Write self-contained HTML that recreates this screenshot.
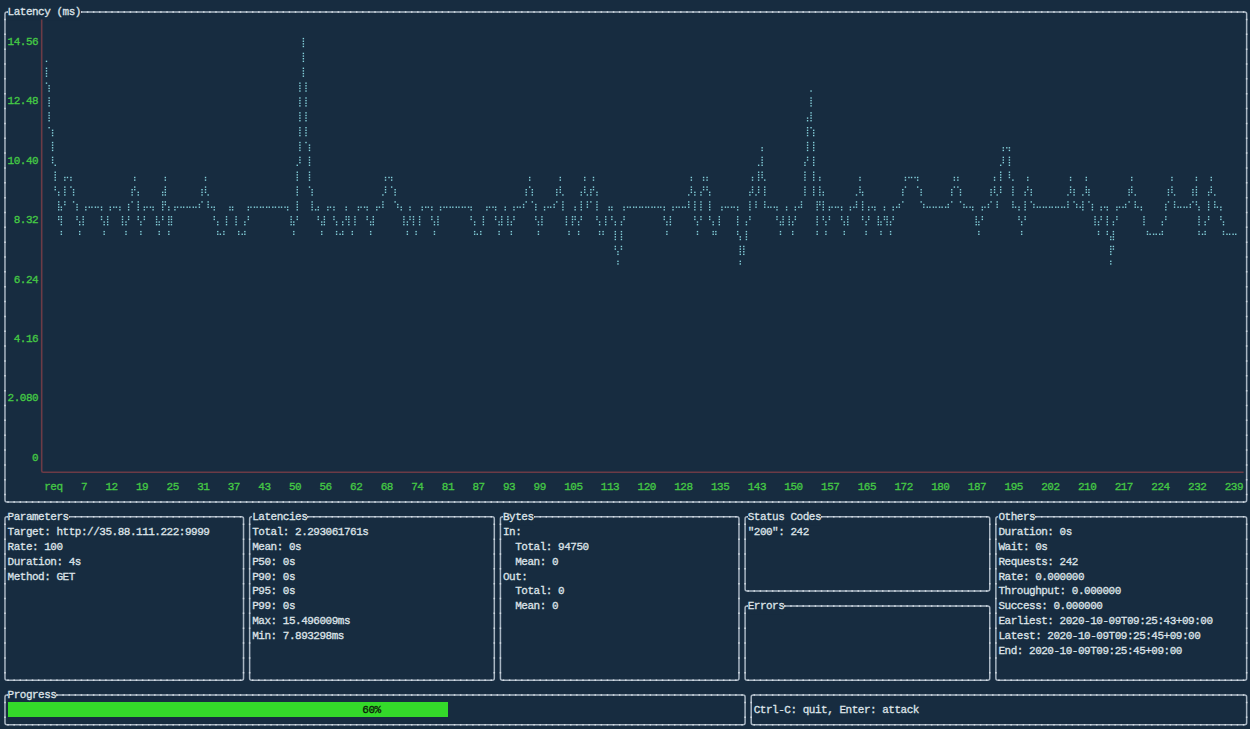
<!DOCTYPE html>
<html><head><meta charset="utf-8"><style>
html,body{margin:0;padding:0;}
body{width:1250px;height:729px;background:#172c40;position:relative;overflow:hidden;}
.t{position:absolute;white-space:pre;font-family:"Liberation Mono",monospace;font-size:11px;letter-spacing:-0.483px;line-height:14.848px;height:14.848px;transform:scaleY(1.05);transform-origin:0 50%;-webkit-text-stroke:0.3px currentColor;}
</style></head><body>
<svg style="position:absolute;left:0;top:0" width="1250" height="729"><g fill="none" stroke="#a9b6c3" stroke-width="1.5"><path d="M6.98,12.03H1244.65Q1246.65,12.03 1246.65,14.03V500.01Q1246.65,502.01 1244.65,502.01H6.98Q4.98,502.01 4.98,500.01V14.03Q4.98,12.03 6.98,12.03Z"/><path class="sp" d="M8.04,12.03h0M8.04,502.01h0M14.15,12.03h0M14.15,502.01h0M20.27,12.03h0M20.27,502.01h0M26.39,12.03h0M26.39,502.01h0M32.50,12.03h0M32.50,502.01h0M38.62,12.03h0M38.62,502.01h0M44.74,12.03h0M44.74,502.01h0M50.85,12.03h0M50.85,502.01h0M56.97,12.03h0M56.97,502.01h0M63.09,12.03h0M63.09,502.01h0M69.20,12.03h0M69.20,502.01h0M75.32,12.03h0M75.32,502.01h0M81.44,12.03h0M81.44,502.01h0M87.55,12.03h0M87.55,502.01h0M93.67,12.03h0M93.67,502.01h0M99.79,12.03h0M99.79,502.01h0M105.90,12.03h0M105.90,502.01h0M112.02,12.03h0M112.02,502.01h0M118.14,12.03h0M118.14,502.01h0M124.25,12.03h0M124.25,502.01h0M130.37,12.03h0M130.37,502.01h0M136.49,12.03h0M136.49,502.01h0M142.60,12.03h0M142.60,502.01h0M148.72,12.03h0M148.72,502.01h0M154.83,12.03h0M154.83,502.01h0M160.95,12.03h0M160.95,502.01h0M167.07,12.03h0M167.07,502.01h0M173.18,12.03h0M173.18,502.01h0M179.30,12.03h0M179.30,502.01h0M185.42,12.03h0M185.42,502.01h0M191.53,12.03h0M191.53,502.01h0M197.65,12.03h0M197.65,502.01h0M203.77,12.03h0M203.77,502.01h0M209.88,12.03h0M209.88,502.01h0M216.00,12.03h0M216.00,502.01h0M222.12,12.03h0M222.12,502.01h0M228.23,12.03h0M228.23,502.01h0M234.35,12.03h0M234.35,502.01h0M240.47,12.03h0M240.47,502.01h0M246.58,12.03h0M246.58,502.01h0M252.70,12.03h0M252.70,502.01h0M258.82,12.03h0M258.82,502.01h0M264.93,12.03h0M264.93,502.01h0M271.05,12.03h0M271.05,502.01h0M277.17,12.03h0M277.17,502.01h0M283.28,12.03h0M283.28,502.01h0M289.40,12.03h0M289.40,502.01h0M295.52,12.03h0M295.52,502.01h0M301.63,12.03h0M301.63,502.01h0M307.75,12.03h0M307.75,502.01h0M313.87,12.03h0M313.87,502.01h0M319.98,12.03h0M319.98,502.01h0M326.10,12.03h0M326.10,502.01h0M332.22,12.03h0M332.22,502.01h0M338.33,12.03h0M338.33,502.01h0M344.45,12.03h0M344.45,502.01h0M350.57,12.03h0M350.57,502.01h0M356.68,12.03h0M356.68,502.01h0M362.80,12.03h0M362.80,502.01h0M368.92,12.03h0M368.92,502.01h0M375.03,12.03h0M375.03,502.01h0M381.15,12.03h0M381.15,502.01h0M387.27,12.03h0M387.27,502.01h0M393.38,12.03h0M393.38,502.01h0M399.50,12.03h0M399.50,502.01h0M405.62,12.03h0M405.62,502.01h0M411.73,12.03h0M411.73,502.01h0M417.85,12.03h0M417.85,502.01h0M423.97,12.03h0M423.97,502.01h0M430.08,12.03h0M430.08,502.01h0M436.20,12.03h0M436.20,502.01h0M442.32,12.03h0M442.32,502.01h0M448.43,12.03h0M448.43,502.01h0M454.55,12.03h0M454.55,502.01h0M460.67,12.03h0M460.67,502.01h0M466.78,12.03h0M466.78,502.01h0M472.90,12.03h0M472.90,502.01h0M479.01,12.03h0M479.01,502.01h0M485.13,12.03h0M485.13,502.01h0M491.25,12.03h0M491.25,502.01h0M497.36,12.03h0M497.36,502.01h0M503.48,12.03h0M503.48,502.01h0M509.60,12.03h0M509.60,502.01h0M515.71,12.03h0M515.71,502.01h0M521.83,12.03h0M521.83,502.01h0M527.95,12.03h0M527.95,502.01h0M534.06,12.03h0M534.06,502.01h0M540.18,12.03h0M540.18,502.01h0M546.30,12.03h0M546.30,502.01h0M552.41,12.03h0M552.41,502.01h0M558.53,12.03h0M558.53,502.01h0M564.65,12.03h0M564.65,502.01h0M570.76,12.03h0M570.76,502.01h0M576.88,12.03h0M576.88,502.01h0M583.00,12.03h0M583.00,502.01h0M589.11,12.03h0M589.11,502.01h0M595.23,12.03h0M595.23,502.01h0M601.35,12.03h0M601.35,502.01h0M607.46,12.03h0M607.46,502.01h0M613.58,12.03h0M613.58,502.01h0M619.70,12.03h0M619.70,502.01h0M625.81,12.03h0M625.81,502.01h0M631.93,12.03h0M631.93,502.01h0M638.05,12.03h0M638.05,502.01h0M644.16,12.03h0M644.16,502.01h0M650.28,12.03h0M650.28,502.01h0M656.40,12.03h0M656.40,502.01h0M662.51,12.03h0M662.51,502.01h0M668.63,12.03h0M668.63,502.01h0M674.75,12.03h0M674.75,502.01h0M680.86,12.03h0M680.86,502.01h0M686.98,12.03h0M686.98,502.01h0M693.10,12.03h0M693.10,502.01h0M699.21,12.03h0M699.21,502.01h0M705.33,12.03h0M705.33,502.01h0M711.45,12.03h0M711.45,502.01h0M717.56,12.03h0M717.56,502.01h0M723.68,12.03h0M723.68,502.01h0M729.80,12.03h0M729.80,502.01h0M735.91,12.03h0M735.91,502.01h0M742.03,12.03h0M742.03,502.01h0M748.15,12.03h0M748.15,502.01h0M754.26,12.03h0M754.26,502.01h0M760.38,12.03h0M760.38,502.01h0M766.50,12.03h0M766.50,502.01h0M772.61,12.03h0M772.61,502.01h0M778.73,12.03h0M778.73,502.01h0M784.84,12.03h0M784.84,502.01h0M790.96,12.03h0M790.96,502.01h0M797.08,12.03h0M797.08,502.01h0M803.19,12.03h0M803.19,502.01h0M809.31,12.03h0M809.31,502.01h0M815.43,12.03h0M815.43,502.01h0M821.54,12.03h0M821.54,502.01h0M827.66,12.03h0M827.66,502.01h0M833.78,12.03h0M833.78,502.01h0M839.89,12.03h0M839.89,502.01h0M846.01,12.03h0M846.01,502.01h0M852.13,12.03h0M852.13,502.01h0M858.24,12.03h0M858.24,502.01h0M864.36,12.03h0M864.36,502.01h0M870.48,12.03h0M870.48,502.01h0M876.59,12.03h0M876.59,502.01h0M882.71,12.03h0M882.71,502.01h0M888.83,12.03h0M888.83,502.01h0M894.94,12.03h0M894.94,502.01h0M901.06,12.03h0M901.06,502.01h0M907.18,12.03h0M907.18,502.01h0M913.29,12.03h0M913.29,502.01h0M919.41,12.03h0M919.41,502.01h0M925.53,12.03h0M925.53,502.01h0M931.64,12.03h0M931.64,502.01h0M937.76,12.03h0M937.76,502.01h0M943.88,12.03h0M943.88,502.01h0M949.99,12.03h0M949.99,502.01h0M956.11,12.03h0M956.11,502.01h0M962.23,12.03h0M962.23,502.01h0M968.34,12.03h0M968.34,502.01h0M974.46,12.03h0M974.46,502.01h0M980.58,12.03h0M980.58,502.01h0M986.69,12.03h0M986.69,502.01h0M992.81,12.03h0M992.81,502.01h0M998.93,12.03h0M998.93,502.01h0M1005.04,12.03h0M1005.04,502.01h0M1011.16,12.03h0M1011.16,502.01h0M1017.28,12.03h0M1017.28,502.01h0M1023.39,12.03h0M1023.39,502.01h0M1029.51,12.03h0M1029.51,502.01h0M1035.63,12.03h0M1035.63,502.01h0M1041.74,12.03h0M1041.74,502.01h0M1047.86,12.03h0M1047.86,502.01h0M1053.98,12.03h0M1053.98,502.01h0M1060.09,12.03h0M1060.09,502.01h0M1066.21,12.03h0M1066.21,502.01h0M1072.33,12.03h0M1072.33,502.01h0M1078.44,12.03h0M1078.44,502.01h0M1084.56,12.03h0M1084.56,502.01h0M1090.67,12.03h0M1090.67,502.01h0M1096.79,12.03h0M1096.79,502.01h0M1102.91,12.03h0M1102.91,502.01h0M1109.02,12.03h0M1109.02,502.01h0M1115.14,12.03h0M1115.14,502.01h0M1121.26,12.03h0M1121.26,502.01h0M1127.37,12.03h0M1127.37,502.01h0M1133.49,12.03h0M1133.49,502.01h0M1139.61,12.03h0M1139.61,502.01h0M1145.72,12.03h0M1145.72,502.01h0M1151.84,12.03h0M1151.84,502.01h0M1157.96,12.03h0M1157.96,502.01h0M1164.07,12.03h0M1164.07,502.01h0M1170.19,12.03h0M1170.19,502.01h0M1176.31,12.03h0M1176.31,502.01h0M1182.42,12.03h0M1182.42,502.01h0M1188.54,12.03h0M1188.54,502.01h0M1194.66,12.03h0M1194.66,502.01h0M1200.77,12.03h0M1200.77,502.01h0M1206.89,12.03h0M1206.89,502.01h0M1213.01,12.03h0M1213.01,502.01h0M1219.12,12.03h0M1219.12,502.01h0M1225.24,12.03h0M1225.24,502.01h0M1231.36,12.03h0M1231.36,502.01h0M1237.47,12.03h0M1237.47,502.01h0M1243.59,12.03h0M1243.59,502.01h0M4.98,19.45h0M1246.65,19.45h0M4.98,34.30h0M1246.65,34.30h0M4.98,49.15h0M1246.65,49.15h0M4.98,64.00h0M1246.65,64.00h0M4.98,78.85h0M1246.65,78.85h0M4.98,93.69h0M1246.65,93.69h0M4.98,108.54h0M1246.65,108.54h0M4.98,123.39h0M1246.65,123.39h0M4.98,138.24h0M1246.65,138.24h0M4.98,153.09h0M1246.65,153.09h0M4.98,167.93h0M1246.65,167.93h0M4.98,182.78h0M1246.65,182.78h0M4.98,197.63h0M1246.65,197.63h0M4.98,212.48h0M1246.65,212.48h0M4.98,227.32h0M1246.65,227.32h0M4.98,242.17h0M1246.65,242.17h0M4.98,257.02h0M1246.65,257.02h0M4.98,271.87h0M1246.65,271.87h0M4.98,286.72h0M1246.65,286.72h0M4.98,301.57h0M1246.65,301.57h0M4.98,316.41h0M1246.65,316.41h0M4.98,331.26h0M1246.65,331.26h0M4.98,346.11h0M1246.65,346.11h0M4.98,360.96h0M1246.65,360.96h0M4.98,375.81h0M1246.65,375.81h0M4.98,390.65h0M1246.65,390.65h0M4.98,405.50h0M1246.65,405.50h0M4.98,420.35h0M1246.65,420.35h0M4.98,435.20h0M1246.65,435.20h0M4.98,450.05h0M1246.65,450.05h0M4.98,464.89h0M1246.65,464.89h0M4.98,479.74h0M1246.65,479.74h0M4.98,494.59h0M1246.65,494.59h0"/><path d="M6.98,516.86H241.53Q243.53,516.86 243.53,518.86V678.19Q243.53,680.19 241.53,680.19H6.98Q4.98,680.19 4.98,678.19V518.86Q4.98,516.86 6.98,516.86Z"/><path class="sp" d="M8.04,516.86h0M8.04,680.19h0M14.15,516.86h0M14.15,680.19h0M20.27,516.86h0M20.27,680.19h0M26.39,516.86h0M26.39,680.19h0M32.50,516.86h0M32.50,680.19h0M38.62,516.86h0M38.62,680.19h0M44.74,516.86h0M44.74,680.19h0M50.85,516.86h0M50.85,680.19h0M56.97,516.86h0M56.97,680.19h0M63.09,516.86h0M63.09,680.19h0M69.20,516.86h0M69.20,680.19h0M75.32,516.86h0M75.32,680.19h0M81.44,516.86h0M81.44,680.19h0M87.55,516.86h0M87.55,680.19h0M93.67,516.86h0M93.67,680.19h0M99.79,516.86h0M99.79,680.19h0M105.90,516.86h0M105.90,680.19h0M112.02,516.86h0M112.02,680.19h0M118.14,516.86h0M118.14,680.19h0M124.25,516.86h0M124.25,680.19h0M130.37,516.86h0M130.37,680.19h0M136.49,516.86h0M136.49,680.19h0M142.60,516.86h0M142.60,680.19h0M148.72,516.86h0M148.72,680.19h0M154.83,516.86h0M154.83,680.19h0M160.95,516.86h0M160.95,680.19h0M167.07,516.86h0M167.07,680.19h0M173.18,516.86h0M173.18,680.19h0M179.30,516.86h0M179.30,680.19h0M185.42,516.86h0M185.42,680.19h0M191.53,516.86h0M191.53,680.19h0M197.65,516.86h0M197.65,680.19h0M203.77,516.86h0M203.77,680.19h0M209.88,516.86h0M209.88,680.19h0M216.00,516.86h0M216.00,680.19h0M222.12,516.86h0M222.12,680.19h0M228.23,516.86h0M228.23,680.19h0M234.35,516.86h0M234.35,680.19h0M240.47,516.86h0M240.47,680.19h0M4.98,524.29h0M243.53,524.29h0M4.98,539.13h0M243.53,539.13h0M4.98,553.98h0M243.53,553.98h0M4.98,568.83h0M243.53,568.83h0M4.98,583.68h0M243.53,583.68h0M4.98,598.53h0M243.53,598.53h0M4.98,613.37h0M243.53,613.37h0M4.98,628.22h0M243.53,628.22h0M4.98,643.07h0M243.53,643.07h0M4.98,657.92h0M243.53,657.92h0M4.98,672.77h0M243.53,672.77h0"/><path d="M251.64,516.86H492.31Q494.31,516.86 494.31,518.86V678.19Q494.31,680.19 492.31,680.19H251.64Q249.64,680.19 249.64,678.19V518.86Q249.64,516.86 251.64,516.86Z"/><path class="sp" d="M252.70,516.86h0M252.70,680.19h0M258.82,516.86h0M258.82,680.19h0M264.93,516.86h0M264.93,680.19h0M271.05,516.86h0M271.05,680.19h0M277.17,516.86h0M277.17,680.19h0M283.28,516.86h0M283.28,680.19h0M289.40,516.86h0M289.40,680.19h0M295.52,516.86h0M295.52,680.19h0M301.63,516.86h0M301.63,680.19h0M307.75,516.86h0M307.75,680.19h0M313.87,516.86h0M313.87,680.19h0M319.98,516.86h0M319.98,680.19h0M326.10,516.86h0M326.10,680.19h0M332.22,516.86h0M332.22,680.19h0M338.33,516.86h0M338.33,680.19h0M344.45,516.86h0M344.45,680.19h0M350.57,516.86h0M350.57,680.19h0M356.68,516.86h0M356.68,680.19h0M362.80,516.86h0M362.80,680.19h0M368.92,516.86h0M368.92,680.19h0M375.03,516.86h0M375.03,680.19h0M381.15,516.86h0M381.15,680.19h0M387.27,516.86h0M387.27,680.19h0M393.38,516.86h0M393.38,680.19h0M399.50,516.86h0M399.50,680.19h0M405.62,516.86h0M405.62,680.19h0M411.73,516.86h0M411.73,680.19h0M417.85,516.86h0M417.85,680.19h0M423.97,516.86h0M423.97,680.19h0M430.08,516.86h0M430.08,680.19h0M436.20,516.86h0M436.20,680.19h0M442.32,516.86h0M442.32,680.19h0M448.43,516.86h0M448.43,680.19h0M454.55,516.86h0M454.55,680.19h0M460.67,516.86h0M460.67,680.19h0M466.78,516.86h0M466.78,680.19h0M472.90,516.86h0M472.90,680.19h0M479.01,516.86h0M479.01,680.19h0M485.13,516.86h0M485.13,680.19h0M491.25,516.86h0M491.25,680.19h0M249.64,524.29h0M494.31,524.29h0M249.64,539.13h0M494.31,539.13h0M249.64,553.98h0M494.31,553.98h0M249.64,568.83h0M494.31,568.83h0M249.64,583.68h0M494.31,583.68h0M249.64,598.53h0M494.31,598.53h0M249.64,613.37h0M494.31,613.37h0M249.64,628.22h0M494.31,628.22h0M249.64,643.07h0M494.31,643.07h0M249.64,657.92h0M494.31,657.92h0M249.64,672.77h0M494.31,672.77h0"/><path d="M502.42,516.86H736.97Q738.97,516.86 738.97,518.86V678.19Q738.97,680.19 736.97,680.19H502.42Q500.42,680.19 500.42,678.19V518.86Q500.42,516.86 502.42,516.86Z"/><path class="sp" d="M503.48,516.86h0M503.48,680.19h0M509.60,516.86h0M509.60,680.19h0M515.71,516.86h0M515.71,680.19h0M521.83,516.86h0M521.83,680.19h0M527.95,516.86h0M527.95,680.19h0M534.06,516.86h0M534.06,680.19h0M540.18,516.86h0M540.18,680.19h0M546.30,516.86h0M546.30,680.19h0M552.41,516.86h0M552.41,680.19h0M558.53,516.86h0M558.53,680.19h0M564.65,516.86h0M564.65,680.19h0M570.76,516.86h0M570.76,680.19h0M576.88,516.86h0M576.88,680.19h0M583.00,516.86h0M583.00,680.19h0M589.11,516.86h0M589.11,680.19h0M595.23,516.86h0M595.23,680.19h0M601.35,516.86h0M601.35,680.19h0M607.46,516.86h0M607.46,680.19h0M613.58,516.86h0M613.58,680.19h0M619.70,516.86h0M619.70,680.19h0M625.81,516.86h0M625.81,680.19h0M631.93,516.86h0M631.93,680.19h0M638.05,516.86h0M638.05,680.19h0M644.16,516.86h0M644.16,680.19h0M650.28,516.86h0M650.28,680.19h0M656.40,516.86h0M656.40,680.19h0M662.51,516.86h0M662.51,680.19h0M668.63,516.86h0M668.63,680.19h0M674.75,516.86h0M674.75,680.19h0M680.86,516.86h0M680.86,680.19h0M686.98,516.86h0M686.98,680.19h0M693.10,516.86h0M693.10,680.19h0M699.21,516.86h0M699.21,680.19h0M705.33,516.86h0M705.33,680.19h0M711.45,516.86h0M711.45,680.19h0M717.56,516.86h0M717.56,680.19h0M723.68,516.86h0M723.68,680.19h0M729.80,516.86h0M729.80,680.19h0M735.91,516.86h0M735.91,680.19h0M500.42,524.29h0M738.97,524.29h0M500.42,539.13h0M738.97,539.13h0M500.42,553.98h0M738.97,553.98h0M500.42,568.83h0M738.97,568.83h0M500.42,583.68h0M738.97,583.68h0M500.42,598.53h0M738.97,598.53h0M500.42,613.37h0M738.97,613.37h0M500.42,628.22h0M738.97,628.22h0M500.42,643.07h0M738.97,643.07h0M500.42,657.92h0M738.97,657.92h0M500.42,672.77h0M738.97,672.77h0"/><path d="M747.09,516.86H987.75Q989.75,516.86 989.75,518.86V589.10Q989.75,591.10 987.75,591.10H747.09Q745.09,591.10 745.09,589.10V518.86Q745.09,516.86 747.09,516.86Z"/><path class="sp" d="M748.15,516.86h0M748.15,591.10h0M754.26,516.86h0M754.26,591.10h0M760.38,516.86h0M760.38,591.10h0M766.50,516.86h0M766.50,591.10h0M772.61,516.86h0M772.61,591.10h0M778.73,516.86h0M778.73,591.10h0M784.84,516.86h0M784.84,591.10h0M790.96,516.86h0M790.96,591.10h0M797.08,516.86h0M797.08,591.10h0M803.19,516.86h0M803.19,591.10h0M809.31,516.86h0M809.31,591.10h0M815.43,516.86h0M815.43,591.10h0M821.54,516.86h0M821.54,591.10h0M827.66,516.86h0M827.66,591.10h0M833.78,516.86h0M833.78,591.10h0M839.89,516.86h0M839.89,591.10h0M846.01,516.86h0M846.01,591.10h0M852.13,516.86h0M852.13,591.10h0M858.24,516.86h0M858.24,591.10h0M864.36,516.86h0M864.36,591.10h0M870.48,516.86h0M870.48,591.10h0M876.59,516.86h0M876.59,591.10h0M882.71,516.86h0M882.71,591.10h0M888.83,516.86h0M888.83,591.10h0M894.94,516.86h0M894.94,591.10h0M901.06,516.86h0M901.06,591.10h0M907.18,516.86h0M907.18,591.10h0M913.29,516.86h0M913.29,591.10h0M919.41,516.86h0M919.41,591.10h0M925.53,516.86h0M925.53,591.10h0M931.64,516.86h0M931.64,591.10h0M937.76,516.86h0M937.76,591.10h0M943.88,516.86h0M943.88,591.10h0M949.99,516.86h0M949.99,591.10h0M956.11,516.86h0M956.11,591.10h0M962.23,516.86h0M962.23,591.10h0M968.34,516.86h0M968.34,591.10h0M974.46,516.86h0M974.46,591.10h0M980.58,516.86h0M980.58,591.10h0M986.69,516.86h0M986.69,591.10h0M745.09,524.29h0M989.75,524.29h0M745.09,539.13h0M989.75,539.13h0M745.09,553.98h0M989.75,553.98h0M745.09,568.83h0M989.75,568.83h0M745.09,583.68h0M989.75,583.68h0"/><path d="M747.09,605.95H987.75Q989.75,605.95 989.75,607.95V678.19Q989.75,680.19 987.75,680.19H747.09Q745.09,680.19 745.09,678.19V607.95Q745.09,605.95 747.09,605.95Z"/><path class="sp" d="M748.15,605.95h0M748.15,680.19h0M754.26,605.95h0M754.26,680.19h0M760.38,605.95h0M760.38,680.19h0M766.50,605.95h0M766.50,680.19h0M772.61,605.95h0M772.61,680.19h0M778.73,605.95h0M778.73,680.19h0M784.84,605.95h0M784.84,680.19h0M790.96,605.95h0M790.96,680.19h0M797.08,605.95h0M797.08,680.19h0M803.19,605.95h0M803.19,680.19h0M809.31,605.95h0M809.31,680.19h0M815.43,605.95h0M815.43,680.19h0M821.54,605.95h0M821.54,680.19h0M827.66,605.95h0M827.66,680.19h0M833.78,605.95h0M833.78,680.19h0M839.89,605.95h0M839.89,680.19h0M846.01,605.95h0M846.01,680.19h0M852.13,605.95h0M852.13,680.19h0M858.24,605.95h0M858.24,680.19h0M864.36,605.95h0M864.36,680.19h0M870.48,605.95h0M870.48,680.19h0M876.59,605.95h0M876.59,680.19h0M882.71,605.95h0M882.71,680.19h0M888.83,605.95h0M888.83,680.19h0M894.94,605.95h0M894.94,680.19h0M901.06,605.95h0M901.06,680.19h0M907.18,605.95h0M907.18,680.19h0M913.29,605.95h0M913.29,680.19h0M919.41,605.95h0M919.41,680.19h0M925.53,605.95h0M925.53,680.19h0M931.64,605.95h0M931.64,680.19h0M937.76,605.95h0M937.76,680.19h0M943.88,605.95h0M943.88,680.19h0M949.99,605.95h0M949.99,680.19h0M956.11,605.95h0M956.11,680.19h0M962.23,605.95h0M962.23,680.19h0M968.34,605.95h0M968.34,680.19h0M974.46,605.95h0M974.46,680.19h0M980.58,605.95h0M980.58,680.19h0M986.69,605.95h0M986.69,680.19h0M745.09,613.37h0M989.75,613.37h0M745.09,628.22h0M989.75,628.22h0M745.09,643.07h0M989.75,643.07h0M745.09,657.92h0M989.75,657.92h0M745.09,672.77h0M989.75,672.77h0"/><path d="M997.87,516.86H1244.65Q1246.65,516.86 1246.65,518.86V678.19Q1246.65,680.19 1244.65,680.19H997.87Q995.87,680.19 995.87,678.19V518.86Q995.87,516.86 997.87,516.86Z"/><path class="sp" d="M998.93,516.86h0M998.93,680.19h0M1005.04,516.86h0M1005.04,680.19h0M1011.16,516.86h0M1011.16,680.19h0M1017.28,516.86h0M1017.28,680.19h0M1023.39,516.86h0M1023.39,680.19h0M1029.51,516.86h0M1029.51,680.19h0M1035.63,516.86h0M1035.63,680.19h0M1041.74,516.86h0M1041.74,680.19h0M1047.86,516.86h0M1047.86,680.19h0M1053.98,516.86h0M1053.98,680.19h0M1060.09,516.86h0M1060.09,680.19h0M1066.21,516.86h0M1066.21,680.19h0M1072.33,516.86h0M1072.33,680.19h0M1078.44,516.86h0M1078.44,680.19h0M1084.56,516.86h0M1084.56,680.19h0M1090.67,516.86h0M1090.67,680.19h0M1096.79,516.86h0M1096.79,680.19h0M1102.91,516.86h0M1102.91,680.19h0M1109.02,516.86h0M1109.02,680.19h0M1115.14,516.86h0M1115.14,680.19h0M1121.26,516.86h0M1121.26,680.19h0M1127.37,516.86h0M1127.37,680.19h0M1133.49,516.86h0M1133.49,680.19h0M1139.61,516.86h0M1139.61,680.19h0M1145.72,516.86h0M1145.72,680.19h0M1151.84,516.86h0M1151.84,680.19h0M1157.96,516.86h0M1157.96,680.19h0M1164.07,516.86h0M1164.07,680.19h0M1170.19,516.86h0M1170.19,680.19h0M1176.31,516.86h0M1176.31,680.19h0M1182.42,516.86h0M1182.42,680.19h0M1188.54,516.86h0M1188.54,680.19h0M1194.66,516.86h0M1194.66,680.19h0M1200.77,516.86h0M1200.77,680.19h0M1206.89,516.86h0M1206.89,680.19h0M1213.01,516.86h0M1213.01,680.19h0M1219.12,516.86h0M1219.12,680.19h0M1225.24,516.86h0M1225.24,680.19h0M1231.36,516.86h0M1231.36,680.19h0M1237.47,516.86h0M1237.47,680.19h0M1243.59,516.86h0M1243.59,680.19h0M995.87,524.29h0M1246.65,524.29h0M995.87,539.13h0M1246.65,539.13h0M995.87,553.98h0M1246.65,553.98h0M995.87,568.83h0M1246.65,568.83h0M995.87,583.68h0M1246.65,583.68h0M995.87,598.53h0M1246.65,598.53h0M995.87,613.37h0M1246.65,613.37h0M995.87,628.22h0M1246.65,628.22h0M995.87,643.07h0M1246.65,643.07h0M995.87,657.92h0M1246.65,657.92h0M995.87,672.77h0M1246.65,672.77h0"/><path d="M6.98,695.04H743.09Q745.09,695.04 745.09,697.04V722.73Q745.09,724.73 743.09,724.73H6.98Q4.98,724.73 4.98,722.73V697.04Q4.98,695.04 6.98,695.04Z"/><path class="sp" d="M8.04,695.04h0M8.04,724.73h0M14.15,695.04h0M14.15,724.73h0M20.27,695.04h0M20.27,724.73h0M26.39,695.04h0M26.39,724.73h0M32.50,695.04h0M32.50,724.73h0M38.62,695.04h0M38.62,724.73h0M44.74,695.04h0M44.74,724.73h0M50.85,695.04h0M50.85,724.73h0M56.97,695.04h0M56.97,724.73h0M63.09,695.04h0M63.09,724.73h0M69.20,695.04h0M69.20,724.73h0M75.32,695.04h0M75.32,724.73h0M81.44,695.04h0M81.44,724.73h0M87.55,695.04h0M87.55,724.73h0M93.67,695.04h0M93.67,724.73h0M99.79,695.04h0M99.79,724.73h0M105.90,695.04h0M105.90,724.73h0M112.02,695.04h0M112.02,724.73h0M118.14,695.04h0M118.14,724.73h0M124.25,695.04h0M124.25,724.73h0M130.37,695.04h0M130.37,724.73h0M136.49,695.04h0M136.49,724.73h0M142.60,695.04h0M142.60,724.73h0M148.72,695.04h0M148.72,724.73h0M154.83,695.04h0M154.83,724.73h0M160.95,695.04h0M160.95,724.73h0M167.07,695.04h0M167.07,724.73h0M173.18,695.04h0M173.18,724.73h0M179.30,695.04h0M179.30,724.73h0M185.42,695.04h0M185.42,724.73h0M191.53,695.04h0M191.53,724.73h0M197.65,695.04h0M197.65,724.73h0M203.77,695.04h0M203.77,724.73h0M209.88,695.04h0M209.88,724.73h0M216.00,695.04h0M216.00,724.73h0M222.12,695.04h0M222.12,724.73h0M228.23,695.04h0M228.23,724.73h0M234.35,695.04h0M234.35,724.73h0M240.47,695.04h0M240.47,724.73h0M246.58,695.04h0M246.58,724.73h0M252.70,695.04h0M252.70,724.73h0M258.82,695.04h0M258.82,724.73h0M264.93,695.04h0M264.93,724.73h0M271.05,695.04h0M271.05,724.73h0M277.17,695.04h0M277.17,724.73h0M283.28,695.04h0M283.28,724.73h0M289.40,695.04h0M289.40,724.73h0M295.52,695.04h0M295.52,724.73h0M301.63,695.04h0M301.63,724.73h0M307.75,695.04h0M307.75,724.73h0M313.87,695.04h0M313.87,724.73h0M319.98,695.04h0M319.98,724.73h0M326.10,695.04h0M326.10,724.73h0M332.22,695.04h0M332.22,724.73h0M338.33,695.04h0M338.33,724.73h0M344.45,695.04h0M344.45,724.73h0M350.57,695.04h0M350.57,724.73h0M356.68,695.04h0M356.68,724.73h0M362.80,695.04h0M362.80,724.73h0M368.92,695.04h0M368.92,724.73h0M375.03,695.04h0M375.03,724.73h0M381.15,695.04h0M381.15,724.73h0M387.27,695.04h0M387.27,724.73h0M393.38,695.04h0M393.38,724.73h0M399.50,695.04h0M399.50,724.73h0M405.62,695.04h0M405.62,724.73h0M411.73,695.04h0M411.73,724.73h0M417.85,695.04h0M417.85,724.73h0M423.97,695.04h0M423.97,724.73h0M430.08,695.04h0M430.08,724.73h0M436.20,695.04h0M436.20,724.73h0M442.32,695.04h0M442.32,724.73h0M448.43,695.04h0M448.43,724.73h0M454.55,695.04h0M454.55,724.73h0M460.67,695.04h0M460.67,724.73h0M466.78,695.04h0M466.78,724.73h0M472.90,695.04h0M472.90,724.73h0M479.01,695.04h0M479.01,724.73h0M485.13,695.04h0M485.13,724.73h0M491.25,695.04h0M491.25,724.73h0M497.36,695.04h0M497.36,724.73h0M503.48,695.04h0M503.48,724.73h0M509.60,695.04h0M509.60,724.73h0M515.71,695.04h0M515.71,724.73h0M521.83,695.04h0M521.83,724.73h0M527.95,695.04h0M527.95,724.73h0M534.06,695.04h0M534.06,724.73h0M540.18,695.04h0M540.18,724.73h0M546.30,695.04h0M546.30,724.73h0M552.41,695.04h0M552.41,724.73h0M558.53,695.04h0M558.53,724.73h0M564.65,695.04h0M564.65,724.73h0M570.76,695.04h0M570.76,724.73h0M576.88,695.04h0M576.88,724.73h0M583.00,695.04h0M583.00,724.73h0M589.11,695.04h0M589.11,724.73h0M595.23,695.04h0M595.23,724.73h0M601.35,695.04h0M601.35,724.73h0M607.46,695.04h0M607.46,724.73h0M613.58,695.04h0M613.58,724.73h0M619.70,695.04h0M619.70,724.73h0M625.81,695.04h0M625.81,724.73h0M631.93,695.04h0M631.93,724.73h0M638.05,695.04h0M638.05,724.73h0M644.16,695.04h0M644.16,724.73h0M650.28,695.04h0M650.28,724.73h0M656.40,695.04h0M656.40,724.73h0M662.51,695.04h0M662.51,724.73h0M668.63,695.04h0M668.63,724.73h0M674.75,695.04h0M674.75,724.73h0M680.86,695.04h0M680.86,724.73h0M686.98,695.04h0M686.98,724.73h0M693.10,695.04h0M693.10,724.73h0M699.21,695.04h0M699.21,724.73h0M705.33,695.04h0M705.33,724.73h0M711.45,695.04h0M711.45,724.73h0M717.56,695.04h0M717.56,724.73h0M723.68,695.04h0M723.68,724.73h0M729.80,695.04h0M729.80,724.73h0M735.91,695.04h0M735.91,724.73h0M742.03,695.04h0M742.03,724.73h0M4.98,702.46h0M745.09,702.46h0M4.98,717.31h0M745.09,717.31h0"/><path d="M753.20,695.04H1244.65Q1246.65,695.04 1246.65,697.04V722.73Q1246.65,724.73 1244.65,724.73H753.20Q751.20,724.73 751.20,722.73V697.04Q751.20,695.04 753.20,695.04Z"/><path class="sp" d="M754.26,695.04h0M754.26,724.73h0M760.38,695.04h0M760.38,724.73h0M766.50,695.04h0M766.50,724.73h0M772.61,695.04h0M772.61,724.73h0M778.73,695.04h0M778.73,724.73h0M784.84,695.04h0M784.84,724.73h0M790.96,695.04h0M790.96,724.73h0M797.08,695.04h0M797.08,724.73h0M803.19,695.04h0M803.19,724.73h0M809.31,695.04h0M809.31,724.73h0M815.43,695.04h0M815.43,724.73h0M821.54,695.04h0M821.54,724.73h0M827.66,695.04h0M827.66,724.73h0M833.78,695.04h0M833.78,724.73h0M839.89,695.04h0M839.89,724.73h0M846.01,695.04h0M846.01,724.73h0M852.13,695.04h0M852.13,724.73h0M858.24,695.04h0M858.24,724.73h0M864.36,695.04h0M864.36,724.73h0M870.48,695.04h0M870.48,724.73h0M876.59,695.04h0M876.59,724.73h0M882.71,695.04h0M882.71,724.73h0M888.83,695.04h0M888.83,724.73h0M894.94,695.04h0M894.94,724.73h0M901.06,695.04h0M901.06,724.73h0M907.18,695.04h0M907.18,724.73h0M913.29,695.04h0M913.29,724.73h0M919.41,695.04h0M919.41,724.73h0M925.53,695.04h0M925.53,724.73h0M931.64,695.04h0M931.64,724.73h0M937.76,695.04h0M937.76,724.73h0M943.88,695.04h0M943.88,724.73h0M949.99,695.04h0M949.99,724.73h0M956.11,695.04h0M956.11,724.73h0M962.23,695.04h0M962.23,724.73h0M968.34,695.04h0M968.34,724.73h0M974.46,695.04h0M974.46,724.73h0M980.58,695.04h0M980.58,724.73h0M986.69,695.04h0M986.69,724.73h0M992.81,695.04h0M992.81,724.73h0M998.93,695.04h0M998.93,724.73h0M1005.04,695.04h0M1005.04,724.73h0M1011.16,695.04h0M1011.16,724.73h0M1017.28,695.04h0M1017.28,724.73h0M1023.39,695.04h0M1023.39,724.73h0M1029.51,695.04h0M1029.51,724.73h0M1035.63,695.04h0M1035.63,724.73h0M1041.74,695.04h0M1041.74,724.73h0M1047.86,695.04h0M1047.86,724.73h0M1053.98,695.04h0M1053.98,724.73h0M1060.09,695.04h0M1060.09,724.73h0M1066.21,695.04h0M1066.21,724.73h0M1072.33,695.04h0M1072.33,724.73h0M1078.44,695.04h0M1078.44,724.73h0M1084.56,695.04h0M1084.56,724.73h0M1090.67,695.04h0M1090.67,724.73h0M1096.79,695.04h0M1096.79,724.73h0M1102.91,695.04h0M1102.91,724.73h0M1109.02,695.04h0M1109.02,724.73h0M1115.14,695.04h0M1115.14,724.73h0M1121.26,695.04h0M1121.26,724.73h0M1127.37,695.04h0M1127.37,724.73h0M1133.49,695.04h0M1133.49,724.73h0M1139.61,695.04h0M1139.61,724.73h0M1145.72,695.04h0M1145.72,724.73h0M1151.84,695.04h0M1151.84,724.73h0M1157.96,695.04h0M1157.96,724.73h0M1164.07,695.04h0M1164.07,724.73h0M1170.19,695.04h0M1170.19,724.73h0M1176.31,695.04h0M1176.31,724.73h0M1182.42,695.04h0M1182.42,724.73h0M1188.54,695.04h0M1188.54,724.73h0M1194.66,695.04h0M1194.66,724.73h0M1200.77,695.04h0M1200.77,724.73h0M1206.89,695.04h0M1206.89,724.73h0M1213.01,695.04h0M1213.01,724.73h0M1219.12,695.04h0M1219.12,724.73h0M1225.24,695.04h0M1225.24,724.73h0M1231.36,695.04h0M1231.36,724.73h0M1237.47,695.04h0M1237.47,724.73h0M1243.59,695.04h0M1243.59,724.73h0M751.20,702.46h0M1246.65,702.46h0M751.20,717.31h0M1246.65,717.31h0"/></g><style>.sp{stroke:#d2dae2;stroke-width:1.5px;stroke-linecap:square;}</style></svg>
<div class="t" style="left:7.54px;top:5px;color:#dde3e8;background:#172c40;">Latency (ms)</div><div class="t" style="left:7.54px;top:510px;color:#dde3e8;background:#172c40;">Parameters</div><div class="t" style="left:252.20px;top:510px;color:#dde3e8;background:#172c40;">Latencies</div><div class="t" style="left:502.98px;top:510px;color:#dde3e8;background:#172c40;">Bytes</div><div class="t" style="left:747.65px;top:510px;color:#dde3e8;background:#172c40;">Status Codes</div><div class="t" style="left:747.65px;top:599px;color:#dde3e8;background:#172c40;">Errors</div><div class="t" style="left:998.43px;top:510px;color:#dde3e8;background:#172c40;">Others</div><div class="t" style="left:7.54px;top:688px;color:#dde3e8;background:#172c40;">Progress</div><div class="t" style="left:7.54px;top:525px;color:#dde3e8;">Target: http://35.88.111.222:9999</div><div class="t" style="left:7.54px;top:540px;color:#dde3e8;">Rate: 100</div><div class="t" style="left:7.54px;top:555px;color:#dde3e8;">Duration: 4s</div><div class="t" style="left:7.54px;top:570px;color:#dde3e8;">Method: GET</div><div class="t" style="left:252.20px;top:525px;color:#dde3e8;">Total: 2.293061761s</div><div class="t" style="left:252.20px;top:540px;color:#dde3e8;">Mean: 0s</div><div class="t" style="left:252.20px;top:555px;color:#dde3e8;">P50: 0s</div><div class="t" style="left:252.20px;top:570px;color:#dde3e8;">P90: 0s</div><div class="t" style="left:252.20px;top:584px;color:#dde3e8;">P95: 0s</div><div class="t" style="left:252.20px;top:599px;color:#dde3e8;">P99: 0s</div><div class="t" style="left:252.20px;top:614px;color:#dde3e8;">Max: 15.496009ms</div><div class="t" style="left:252.20px;top:629px;color:#dde3e8;">Min: 7.893298ms</div><div class="t" style="left:502.98px;top:525px;color:#dde3e8;">In:</div><div class="t" style="left:502.98px;top:540px;color:#dde3e8;">  Total: 94750</div><div class="t" style="left:502.98px;top:555px;color:#dde3e8;">  Mean: 0</div><div class="t" style="left:502.98px;top:570px;color:#dde3e8;">Out:</div><div class="t" style="left:502.98px;top:584px;color:#dde3e8;">  Total: 0</div><div class="t" style="left:502.98px;top:599px;color:#dde3e8;">  Mean: 0</div><div class="t" style="left:747.65px;top:525px;color:#dde3e8;">"200": 242</div><div class="t" style="left:998.43px;top:525px;color:#dde3e8;">Duration: 0s</div><div class="t" style="left:998.43px;top:540px;color:#dde3e8;">Wait: 0s</div><div class="t" style="left:998.43px;top:555px;color:#dde3e8;">Requests: 242</div><div class="t" style="left:998.43px;top:570px;color:#dde3e8;">Rate: 0.000000</div><div class="t" style="left:998.43px;top:584px;color:#dde3e8;">Throughput: 0.000000</div><div class="t" style="left:998.43px;top:599px;color:#dde3e8;">Success: 0.000000</div><div class="t" style="left:998.43px;top:614px;color:#dde3e8;">Earliest: 2020-10-09T09:25:43+09:00</div><div class="t" style="left:998.43px;top:629px;color:#dde3e8;">Latest: 2020-10-09T09:25:45+09:00</div><div class="t" style="left:998.43px;top:644px;color:#dde3e8;">End: 2020-10-09T09:25:45+09:00</div><div class="t" style="left:753.76px;top:703px;color:#dde3e8;">Ctrl-C: quit, Enter: attack</div><div style="position:absolute;left:8.04px;top:702.46px;width:440.40px;height:14.85px;background:#34d92a"></div><div class="t" style="left:362.30px;top:703px;color:#0b1a08;">60%</div><div class="t" style="left:7.54px;top:35px;color:#45c945;">14.56</div><div class="t" style="left:7.54px;top:94px;color:#45c945;">12.48</div><div class="t" style="left:7.54px;top:154px;color:#45c945;">10.40</div><div class="t" style="left:13.65px;top:213px;color:#45c945;">8.32</div><div class="t" style="left:13.65px;top:273px;color:#45c945;">6.24</div><div class="t" style="left:13.65px;top:332px;color:#45c945;">4.16</div><div class="t" style="left:7.54px;top:391px;color:#45c945;">2.080</div><div class="t" style="left:32.00px;top:451px;color:#45c945;">0</div><div class="t" style="left:44.24px;top:480px;color:#45c945;">req</div><div class="t" style="left:80.94px;top:480px;color:#45c945;">7</div><div class="t" style="left:105.40px;top:480px;color:#45c945;">12</div><div class="t" style="left:135.99px;top:480px;color:#45c945;">19</div><div class="t" style="left:166.57px;top:480px;color:#45c945;">25</div><div class="t" style="left:197.15px;top:480px;color:#45c945;">31</div><div class="t" style="left:227.73px;top:480px;color:#45c945;">37</div><div class="t" style="left:258.32px;top:480px;color:#45c945;">43</div><div class="t" style="left:288.90px;top:480px;color:#45c945;">50</div><div class="t" style="left:319.48px;top:480px;color:#45c945;">56</div><div class="t" style="left:350.07px;top:480px;color:#45c945;">62</div><div class="t" style="left:380.65px;top:480px;color:#45c945;">68</div><div class="t" style="left:411.23px;top:480px;color:#45c945;">74</div><div class="t" style="left:441.82px;top:480px;color:#45c945;">81</div><div class="t" style="left:472.40px;top:480px;color:#45c945;">87</div><div class="t" style="left:502.98px;top:480px;color:#45c945;">93</div><div class="t" style="left:533.56px;top:480px;color:#45c945;">99</div><div class="t" style="left:564.15px;top:480px;color:#45c945;">105</div><div class="t" style="left:600.85px;top:480px;color:#45c945;">113</div><div class="t" style="left:637.55px;top:480px;color:#45c945;">120</div><div class="t" style="left:674.25px;top:480px;color:#45c945;">128</div><div class="t" style="left:710.95px;top:480px;color:#45c945;">135</div><div class="t" style="left:747.65px;top:480px;color:#45c945;">143</div><div class="t" style="left:784.34px;top:480px;color:#45c945;">150</div><div class="t" style="left:821.04px;top:480px;color:#45c945;">157</div><div class="t" style="left:857.74px;top:480px;color:#45c945;">165</div><div class="t" style="left:894.44px;top:480px;color:#45c945;">172</div><div class="t" style="left:931.14px;top:480px;color:#45c945;">180</div><div class="t" style="left:967.84px;top:480px;color:#45c945;">187</div><div class="t" style="left:1004.54px;top:480px;color:#45c945;">195</div><div class="t" style="left:1041.24px;top:480px;color:#45c945;">202</div><div class="t" style="left:1077.94px;top:480px;color:#45c945;">210</div><div class="t" style="left:1114.64px;top:480px;color:#45c945;">217</div><div class="t" style="left:1151.34px;top:480px;color:#45c945;">224</div><div class="t" style="left:1188.04px;top:480px;color:#45c945;">232</div><div class="t" style="left:1224.74px;top:480px;color:#45c945;">239</div><svg style="position:absolute;left:0;top:0" width="1250" height="729"><path d="M41.68,19.45V470.82Q41.68,472.32 43.18,472.32H1243.59" fill="none" stroke="#6c3b46" stroke-width="1.6"/></svg>
<svg style="position:absolute;left:0;top:0" width="1250" height="729" fill="#86d2dc"><rect x="45.79" y="60.64" width="1.4" height="1.4"/><rect x="45.79" y="67.60" width="1.4" height="1.4"/><rect x="45.79" y="70.23" width="1.4" height="1.4"/><rect x="45.79" y="72.86" width="1.4" height="1.4"/><rect x="45.79" y="75.49" width="1.4" height="1.4"/><rect x="45.79" y="82.45" width="1.4" height="1.4"/><rect x="48.42" y="85.08" width="1.4" height="1.4"/><rect x="48.42" y="87.71" width="1.4" height="1.4"/><rect x="48.42" y="90.34" width="1.4" height="1.4"/><rect x="48.42" y="97.29" width="1.4" height="1.4"/><rect x="48.42" y="99.92" width="1.4" height="1.4"/><rect x="48.42" y="102.55" width="1.4" height="1.4"/><rect x="48.42" y="105.18" width="1.4" height="1.4"/><rect x="48.42" y="112.14" width="1.4" height="1.4"/><rect x="48.42" y="114.77" width="1.4" height="1.4"/><rect x="48.42" y="117.40" width="1.4" height="1.4"/><rect x="48.42" y="120.03" width="1.4" height="1.4"/><rect x="48.42" y="126.99" width="1.4" height="1.4"/><rect x="51.90" y="129.62" width="1.4" height="1.4"/><rect x="51.90" y="132.25" width="1.4" height="1.4"/><rect x="51.90" y="134.88" width="1.4" height="1.4"/><rect x="51.90" y="141.84" width="1.4" height="1.4"/><rect x="51.90" y="144.47" width="1.4" height="1.4"/><rect x="51.90" y="147.10" width="1.4" height="1.4"/><rect x="51.90" y="149.73" width="1.4" height="1.4"/><rect x="51.90" y="156.69" width="1.4" height="1.4"/><rect x="51.90" y="159.32" width="1.4" height="1.4"/><rect x="51.90" y="161.95" width="1.4" height="1.4"/><rect x="54.53" y="164.58" width="1.4" height="1.4"/><rect x="54.53" y="171.53" width="1.4" height="1.4"/><rect x="54.53" y="174.16" width="1.4" height="1.4"/><rect x="54.53" y="176.79" width="1.4" height="1.4"/><rect x="54.53" y="179.42" width="1.4" height="1.4"/><rect x="54.53" y="186.38" width="1.4" height="1.4"/><rect x="54.53" y="189.01" width="1.4" height="1.4"/><rect x="58.02" y="191.64" width="1.4" height="1.4"/><rect x="58.02" y="194.27" width="1.4" height="1.4"/><rect x="58.02" y="201.23" width="1.4" height="1.4"/><rect x="58.02" y="203.86" width="1.4" height="1.4"/><rect x="58.02" y="206.49" width="1.4" height="1.4"/><rect x="58.02" y="209.12" width="1.4" height="1.4"/><rect x="58.02" y="216.08" width="1.4" height="1.4"/><rect x="58.02" y="218.71" width="1.4" height="1.4"/><rect x="60.65" y="206.49" width="1.4" height="1.4"/><rect x="60.65" y="209.12" width="1.4" height="1.4"/><rect x="60.65" y="216.08" width="1.4" height="1.4"/><rect x="60.65" y="218.71" width="1.4" height="1.4"/><rect x="60.65" y="221.34" width="1.4" height="1.4"/><rect x="60.65" y="223.97" width="1.4" height="1.4"/><rect x="60.65" y="230.93" width="1.4" height="1.4"/><rect x="60.65" y="233.56" width="1.4" height="1.4"/><rect x="64.14" y="176.79" width="1.4" height="1.4"/><rect x="64.14" y="179.42" width="1.4" height="1.4"/><rect x="64.14" y="186.38" width="1.4" height="1.4"/><rect x="64.14" y="189.01" width="1.4" height="1.4"/><rect x="64.14" y="191.64" width="1.4" height="1.4"/><rect x="64.14" y="194.27" width="1.4" height="1.4"/><rect x="64.14" y="201.23" width="1.4" height="1.4"/><rect x="64.14" y="203.86" width="1.4" height="1.4"/><rect x="66.77" y="176.79" width="1.4" height="1.4"/><rect x="70.25" y="176.79" width="1.4" height="1.4"/><rect x="70.25" y="179.42" width="1.4" height="1.4"/><rect x="70.25" y="186.38" width="1.4" height="1.4"/><rect x="72.88" y="189.01" width="1.4" height="1.4"/><rect x="72.88" y="191.64" width="1.4" height="1.4"/><rect x="72.88" y="194.27" width="1.4" height="1.4"/><rect x="72.88" y="201.23" width="1.4" height="1.4"/><rect x="76.37" y="203.86" width="1.4" height="1.4"/><rect x="76.37" y="206.49" width="1.4" height="1.4"/><rect x="76.37" y="209.12" width="1.4" height="1.4"/><rect x="76.37" y="216.08" width="1.4" height="1.4"/><rect x="76.37" y="218.71" width="1.4" height="1.4"/><rect x="79.00" y="221.34" width="1.4" height="1.4"/><rect x="79.00" y="223.97" width="1.4" height="1.4"/><rect x="79.00" y="230.93" width="1.4" height="1.4"/><rect x="79.00" y="233.56" width="1.4" height="1.4"/><rect x="82.49" y="216.08" width="1.4" height="1.4"/><rect x="82.49" y="218.71" width="1.4" height="1.4"/><rect x="82.49" y="221.34" width="1.4" height="1.4"/><rect x="82.49" y="223.97" width="1.4" height="1.4"/><rect x="85.12" y="206.49" width="1.4" height="1.4"/><rect x="85.12" y="209.12" width="1.4" height="1.4"/><rect x="88.60" y="206.49" width="1.4" height="1.4"/><rect x="91.23" y="206.49" width="1.4" height="1.4"/><rect x="94.72" y="206.49" width="1.4" height="1.4"/><rect x="97.35" y="206.49" width="1.4" height="1.4"/><rect x="100.84" y="206.49" width="1.4" height="1.4"/><rect x="100.84" y="209.12" width="1.4" height="1.4"/><rect x="100.84" y="216.08" width="1.4" height="1.4"/><rect x="100.84" y="218.71" width="1.4" height="1.4"/><rect x="103.47" y="221.34" width="1.4" height="1.4"/><rect x="103.47" y="223.97" width="1.4" height="1.4"/><rect x="103.47" y="230.93" width="1.4" height="1.4"/><rect x="103.47" y="233.56" width="1.4" height="1.4"/><rect x="106.95" y="216.08" width="1.4" height="1.4"/><rect x="106.95" y="218.71" width="1.4" height="1.4"/><rect x="106.95" y="221.34" width="1.4" height="1.4"/><rect x="106.95" y="223.97" width="1.4" height="1.4"/><rect x="109.58" y="206.49" width="1.4" height="1.4"/><rect x="109.58" y="209.12" width="1.4" height="1.4"/><rect x="113.07" y="206.49" width="1.4" height="1.4"/><rect x="115.70" y="206.49" width="1.4" height="1.4"/><rect x="119.19" y="206.49" width="1.4" height="1.4"/><rect x="119.19" y="209.12" width="1.4" height="1.4"/><rect x="121.82" y="216.08" width="1.4" height="1.4"/><rect x="121.82" y="218.71" width="1.4" height="1.4"/><rect x="121.82" y="221.34" width="1.4" height="1.4"/><rect x="121.82" y="223.97" width="1.4" height="1.4"/><rect x="125.30" y="221.34" width="1.4" height="1.4"/><rect x="125.30" y="223.97" width="1.4" height="1.4"/><rect x="125.30" y="230.93" width="1.4" height="1.4"/><rect x="125.30" y="233.56" width="1.4" height="1.4"/><rect x="127.93" y="203.86" width="1.4" height="1.4"/><rect x="127.93" y="206.49" width="1.4" height="1.4"/><rect x="127.93" y="209.12" width="1.4" height="1.4"/><rect x="127.93" y="216.08" width="1.4" height="1.4"/><rect x="127.93" y="218.71" width="1.4" height="1.4"/><rect x="131.42" y="189.01" width="1.4" height="1.4"/><rect x="131.42" y="191.64" width="1.4" height="1.4"/><rect x="131.42" y="194.27" width="1.4" height="1.4"/><rect x="131.42" y="201.23" width="1.4" height="1.4"/><rect x="134.05" y="176.79" width="1.4" height="1.4"/><rect x="134.05" y="179.42" width="1.4" height="1.4"/><rect x="134.05" y="186.38" width="1.4" height="1.4"/><rect x="134.05" y="189.01" width="1.4" height="1.4"/><rect x="137.54" y="191.64" width="1.4" height="1.4"/><rect x="137.54" y="194.27" width="1.4" height="1.4"/><rect x="137.54" y="201.23" width="1.4" height="1.4"/><rect x="137.54" y="203.86" width="1.4" height="1.4"/><rect x="137.54" y="206.49" width="1.4" height="1.4"/><rect x="137.54" y="209.12" width="1.4" height="1.4"/><rect x="137.54" y="216.08" width="1.4" height="1.4"/><rect x="137.54" y="218.71" width="1.4" height="1.4"/><rect x="140.17" y="221.34" width="1.4" height="1.4"/><rect x="140.17" y="223.97" width="1.4" height="1.4"/><rect x="140.17" y="230.93" width="1.4" height="1.4"/><rect x="140.17" y="233.56" width="1.4" height="1.4"/><rect x="143.65" y="206.49" width="1.4" height="1.4"/><rect x="143.65" y="209.12" width="1.4" height="1.4"/><rect x="143.65" y="216.08" width="1.4" height="1.4"/><rect x="143.65" y="218.71" width="1.4" height="1.4"/><rect x="146.28" y="206.49" width="1.4" height="1.4"/><rect x="149.77" y="206.49" width="1.4" height="1.4"/><rect x="152.40" y="206.49" width="1.4" height="1.4"/><rect x="152.40" y="209.12" width="1.4" height="1.4"/><rect x="155.88" y="216.08" width="1.4" height="1.4"/><rect x="155.88" y="218.71" width="1.4" height="1.4"/><rect x="155.88" y="221.34" width="1.4" height="1.4"/><rect x="155.88" y="223.97" width="1.4" height="1.4"/><rect x="158.51" y="221.34" width="1.4" height="1.4"/><rect x="158.51" y="223.97" width="1.4" height="1.4"/><rect x="158.51" y="230.93" width="1.4" height="1.4"/><rect x="158.51" y="233.56" width="1.4" height="1.4"/><rect x="162.00" y="191.64" width="1.4" height="1.4"/><rect x="162.00" y="194.27" width="1.4" height="1.4"/><rect x="162.00" y="201.23" width="1.4" height="1.4"/><rect x="162.00" y="203.86" width="1.4" height="1.4"/><rect x="162.00" y="206.49" width="1.4" height="1.4"/><rect x="162.00" y="209.12" width="1.4" height="1.4"/><rect x="162.00" y="216.08" width="1.4" height="1.4"/><rect x="162.00" y="218.71" width="1.4" height="1.4"/><rect x="164.63" y="176.79" width="1.4" height="1.4"/><rect x="164.63" y="179.42" width="1.4" height="1.4"/><rect x="164.63" y="186.38" width="1.4" height="1.4"/><rect x="164.63" y="189.01" width="1.4" height="1.4"/><rect x="164.63" y="191.64" width="1.4" height="1.4"/><rect x="164.63" y="194.27" width="1.4" height="1.4"/><rect x="164.63" y="201.23" width="1.4" height="1.4"/><rect x="164.63" y="203.86" width="1.4" height="1.4"/><rect x="168.12" y="206.49" width="1.4" height="1.4"/><rect x="168.12" y="209.12" width="1.4" height="1.4"/><rect x="168.12" y="216.08" width="1.4" height="1.4"/><rect x="168.12" y="218.71" width="1.4" height="1.4"/><rect x="168.12" y="221.34" width="1.4" height="1.4"/><rect x="168.12" y="223.97" width="1.4" height="1.4"/><rect x="168.12" y="230.93" width="1.4" height="1.4"/><rect x="168.12" y="233.56" width="1.4" height="1.4"/><rect x="170.75" y="216.08" width="1.4" height="1.4"/><rect x="170.75" y="218.71" width="1.4" height="1.4"/><rect x="170.75" y="221.34" width="1.4" height="1.4"/><rect x="170.75" y="223.97" width="1.4" height="1.4"/><rect x="174.23" y="206.49" width="1.4" height="1.4"/><rect x="174.23" y="209.12" width="1.4" height="1.4"/><rect x="176.86" y="206.49" width="1.4" height="1.4"/><rect x="180.35" y="206.49" width="1.4" height="1.4"/><rect x="182.98" y="206.49" width="1.4" height="1.4"/><rect x="186.47" y="206.49" width="1.4" height="1.4"/><rect x="189.10" y="206.49" width="1.4" height="1.4"/><rect x="192.58" y="206.49" width="1.4" height="1.4"/><rect x="195.21" y="206.49" width="1.4" height="1.4"/><rect x="198.70" y="203.86" width="1.4" height="1.4"/><rect x="198.70" y="206.49" width="1.4" height="1.4"/><rect x="201.33" y="189.01" width="1.4" height="1.4"/><rect x="201.33" y="191.64" width="1.4" height="1.4"/><rect x="201.33" y="194.27" width="1.4" height="1.4"/><rect x="201.33" y="201.23" width="1.4" height="1.4"/><rect x="204.82" y="176.79" width="1.4" height="1.4"/><rect x="204.82" y="179.42" width="1.4" height="1.4"/><rect x="204.82" y="186.38" width="1.4" height="1.4"/><rect x="204.82" y="189.01" width="1.4" height="1.4"/><rect x="204.82" y="191.64" width="1.4" height="1.4"/><rect x="207.45" y="194.27" width="1.4" height="1.4"/><rect x="207.45" y="201.23" width="1.4" height="1.4"/><rect x="207.45" y="203.86" width="1.4" height="1.4"/><rect x="207.45" y="206.49" width="1.4" height="1.4"/><rect x="210.93" y="206.49" width="1.4" height="1.4"/><rect x="213.56" y="206.49" width="1.4" height="1.4"/><rect x="213.56" y="209.12" width="1.4" height="1.4"/><rect x="213.56" y="216.08" width="1.4" height="1.4"/><rect x="213.56" y="218.71" width="1.4" height="1.4"/><rect x="217.05" y="221.34" width="1.4" height="1.4"/><rect x="217.05" y="223.97" width="1.4" height="1.4"/><rect x="217.05" y="230.93" width="1.4" height="1.4"/><rect x="217.05" y="233.56" width="1.4" height="1.4"/><rect x="219.68" y="233.56" width="1.4" height="1.4"/><rect x="223.17" y="230.93" width="1.4" height="1.4"/><rect x="223.17" y="233.56" width="1.4" height="1.4"/><rect x="225.80" y="216.08" width="1.4" height="1.4"/><rect x="225.80" y="218.71" width="1.4" height="1.4"/><rect x="225.80" y="221.34" width="1.4" height="1.4"/><rect x="225.80" y="223.97" width="1.4" height="1.4"/><rect x="229.28" y="206.49" width="1.4" height="1.4"/><rect x="229.28" y="209.12" width="1.4" height="1.4"/><rect x="231.91" y="206.49" width="1.4" height="1.4"/><rect x="231.91" y="209.12" width="1.4" height="1.4"/><rect x="235.40" y="216.08" width="1.4" height="1.4"/><rect x="235.40" y="218.71" width="1.4" height="1.4"/><rect x="235.40" y="221.34" width="1.4" height="1.4"/><rect x="235.40" y="223.97" width="1.4" height="1.4"/><rect x="238.03" y="230.93" width="1.4" height="1.4"/><rect x="238.03" y="233.56" width="1.4" height="1.4"/><rect x="241.52" y="233.56" width="1.4" height="1.4"/><rect x="244.15" y="221.34" width="1.4" height="1.4"/><rect x="244.15" y="223.97" width="1.4" height="1.4"/><rect x="244.15" y="230.93" width="1.4" height="1.4"/><rect x="244.15" y="233.56" width="1.4" height="1.4"/><rect x="247.63" y="206.49" width="1.4" height="1.4"/><rect x="247.63" y="209.12" width="1.4" height="1.4"/><rect x="247.63" y="216.08" width="1.4" height="1.4"/><rect x="247.63" y="218.71" width="1.4" height="1.4"/><rect x="250.26" y="206.49" width="1.4" height="1.4"/><rect x="253.75" y="206.49" width="1.4" height="1.4"/><rect x="256.38" y="206.49" width="1.4" height="1.4"/><rect x="259.87" y="206.49" width="1.4" height="1.4"/><rect x="262.50" y="206.49" width="1.4" height="1.4"/><rect x="265.98" y="206.49" width="1.4" height="1.4"/><rect x="268.61" y="206.49" width="1.4" height="1.4"/><rect x="272.10" y="206.49" width="1.4" height="1.4"/><rect x="274.73" y="206.49" width="1.4" height="1.4"/><rect x="278.22" y="206.49" width="1.4" height="1.4"/><rect x="280.85" y="206.49" width="1.4" height="1.4"/><rect x="284.33" y="206.49" width="1.4" height="1.4"/><rect x="286.96" y="206.49" width="1.4" height="1.4"/><rect x="286.96" y="209.12" width="1.4" height="1.4"/><rect x="290.45" y="216.08" width="1.4" height="1.4"/><rect x="290.45" y="218.71" width="1.4" height="1.4"/><rect x="290.45" y="221.34" width="1.4" height="1.4"/><rect x="290.45" y="223.97" width="1.4" height="1.4"/><rect x="293.08" y="221.34" width="1.4" height="1.4"/><rect x="293.08" y="223.97" width="1.4" height="1.4"/><rect x="293.08" y="230.93" width="1.4" height="1.4"/><rect x="293.08" y="233.56" width="1.4" height="1.4"/><rect x="296.57" y="164.58" width="1.4" height="1.4"/><rect x="296.57" y="171.53" width="1.4" height="1.4"/><rect x="296.57" y="174.16" width="1.4" height="1.4"/><rect x="296.57" y="176.79" width="1.4" height="1.4"/><rect x="296.57" y="179.42" width="1.4" height="1.4"/><rect x="296.57" y="186.38" width="1.4" height="1.4"/><rect x="296.57" y="189.01" width="1.4" height="1.4"/><rect x="296.57" y="191.64" width="1.4" height="1.4"/><rect x="296.57" y="194.27" width="1.4" height="1.4"/><rect x="296.57" y="201.23" width="1.4" height="1.4"/><rect x="296.57" y="203.86" width="1.4" height="1.4"/><rect x="296.57" y="206.49" width="1.4" height="1.4"/><rect x="296.57" y="209.12" width="1.4" height="1.4"/><rect x="296.57" y="216.08" width="1.4" height="1.4"/><rect x="296.57" y="218.71" width="1.4" height="1.4"/><rect x="299.20" y="82.45" width="1.4" height="1.4"/><rect x="299.20" y="85.08" width="1.4" height="1.4"/><rect x="299.20" y="87.71" width="1.4" height="1.4"/><rect x="299.20" y="90.34" width="1.4" height="1.4"/><rect x="299.20" y="97.29" width="1.4" height="1.4"/><rect x="299.20" y="99.92" width="1.4" height="1.4"/><rect x="299.20" y="102.55" width="1.4" height="1.4"/><rect x="299.20" y="105.18" width="1.4" height="1.4"/><rect x="299.20" y="112.14" width="1.4" height="1.4"/><rect x="299.20" y="114.77" width="1.4" height="1.4"/><rect x="299.20" y="117.40" width="1.4" height="1.4"/><rect x="299.20" y="120.03" width="1.4" height="1.4"/><rect x="299.20" y="126.99" width="1.4" height="1.4"/><rect x="299.20" y="129.62" width="1.4" height="1.4"/><rect x="299.20" y="132.25" width="1.4" height="1.4"/><rect x="299.20" y="134.88" width="1.4" height="1.4"/><rect x="299.20" y="141.84" width="1.4" height="1.4"/><rect x="299.20" y="144.47" width="1.4" height="1.4"/><rect x="299.20" y="147.10" width="1.4" height="1.4"/><rect x="299.20" y="149.73" width="1.4" height="1.4"/><rect x="299.20" y="156.69" width="1.4" height="1.4"/><rect x="299.20" y="159.32" width="1.4" height="1.4"/><rect x="299.20" y="161.95" width="1.4" height="1.4"/><rect x="302.68" y="37.90" width="1.4" height="1.4"/><rect x="302.68" y="40.53" width="1.4" height="1.4"/><rect x="302.68" y="43.16" width="1.4" height="1.4"/><rect x="302.68" y="45.79" width="1.4" height="1.4"/><rect x="302.68" y="52.75" width="1.4" height="1.4"/><rect x="302.68" y="55.38" width="1.4" height="1.4"/><rect x="302.68" y="58.01" width="1.4" height="1.4"/><rect x="302.68" y="60.64" width="1.4" height="1.4"/><rect x="302.68" y="67.60" width="1.4" height="1.4"/><rect x="302.68" y="70.23" width="1.4" height="1.4"/><rect x="302.68" y="72.86" width="1.4" height="1.4"/><rect x="302.68" y="75.49" width="1.4" height="1.4"/><rect x="305.31" y="82.45" width="1.4" height="1.4"/><rect x="305.31" y="85.08" width="1.4" height="1.4"/><rect x="305.31" y="87.71" width="1.4" height="1.4"/><rect x="305.31" y="90.34" width="1.4" height="1.4"/><rect x="305.31" y="97.29" width="1.4" height="1.4"/><rect x="305.31" y="99.92" width="1.4" height="1.4"/><rect x="305.31" y="102.55" width="1.4" height="1.4"/><rect x="305.31" y="105.18" width="1.4" height="1.4"/><rect x="305.31" y="112.14" width="1.4" height="1.4"/><rect x="305.31" y="114.77" width="1.4" height="1.4"/><rect x="305.31" y="117.40" width="1.4" height="1.4"/><rect x="305.31" y="120.03" width="1.4" height="1.4"/><rect x="305.31" y="126.99" width="1.4" height="1.4"/><rect x="305.31" y="129.62" width="1.4" height="1.4"/><rect x="305.31" y="132.25" width="1.4" height="1.4"/><rect x="305.31" y="134.88" width="1.4" height="1.4"/><rect x="305.31" y="141.84" width="1.4" height="1.4"/><rect x="308.80" y="144.47" width="1.4" height="1.4"/><rect x="308.80" y="147.10" width="1.4" height="1.4"/><rect x="308.80" y="149.73" width="1.4" height="1.4"/><rect x="308.80" y="156.69" width="1.4" height="1.4"/><rect x="308.80" y="159.32" width="1.4" height="1.4"/><rect x="308.80" y="161.95" width="1.4" height="1.4"/><rect x="308.80" y="164.58" width="1.4" height="1.4"/><rect x="308.80" y="171.53" width="1.4" height="1.4"/><rect x="308.80" y="174.16" width="1.4" height="1.4"/><rect x="308.80" y="176.79" width="1.4" height="1.4"/><rect x="308.80" y="179.42" width="1.4" height="1.4"/><rect x="308.80" y="186.38" width="1.4" height="1.4"/><rect x="311.43" y="189.01" width="1.4" height="1.4"/><rect x="311.43" y="191.64" width="1.4" height="1.4"/><rect x="311.43" y="194.27" width="1.4" height="1.4"/><rect x="311.43" y="201.23" width="1.4" height="1.4"/><rect x="311.43" y="203.86" width="1.4" height="1.4"/><rect x="311.43" y="206.49" width="1.4" height="1.4"/><rect x="311.43" y="209.12" width="1.4" height="1.4"/><rect x="314.92" y="209.12" width="1.4" height="1.4"/><rect x="317.55" y="206.49" width="1.4" height="1.4"/><rect x="317.55" y="209.12" width="1.4" height="1.4"/><rect x="317.55" y="216.08" width="1.4" height="1.4"/><rect x="317.55" y="218.71" width="1.4" height="1.4"/><rect x="321.03" y="221.34" width="1.4" height="1.4"/><rect x="321.03" y="223.97" width="1.4" height="1.4"/><rect x="321.03" y="230.93" width="1.4" height="1.4"/><rect x="321.03" y="233.56" width="1.4" height="1.4"/><rect x="323.66" y="216.08" width="1.4" height="1.4"/><rect x="323.66" y="218.71" width="1.4" height="1.4"/><rect x="323.66" y="221.34" width="1.4" height="1.4"/><rect x="323.66" y="223.97" width="1.4" height="1.4"/><rect x="327.15" y="206.49" width="1.4" height="1.4"/><rect x="327.15" y="209.12" width="1.4" height="1.4"/><rect x="329.78" y="206.49" width="1.4" height="1.4"/><rect x="333.27" y="206.49" width="1.4" height="1.4"/><rect x="333.27" y="209.12" width="1.4" height="1.4"/><rect x="333.27" y="216.08" width="1.4" height="1.4"/><rect x="333.27" y="218.71" width="1.4" height="1.4"/><rect x="335.90" y="221.34" width="1.4" height="1.4"/><rect x="335.90" y="223.97" width="1.4" height="1.4"/><rect x="335.90" y="230.93" width="1.4" height="1.4"/><rect x="335.90" y="233.56" width="1.4" height="1.4"/><rect x="339.38" y="233.56" width="1.4" height="1.4"/><rect x="342.01" y="221.34" width="1.4" height="1.4"/><rect x="342.01" y="223.97" width="1.4" height="1.4"/><rect x="342.01" y="230.93" width="1.4" height="1.4"/><rect x="342.01" y="233.56" width="1.4" height="1.4"/><rect x="345.50" y="206.49" width="1.4" height="1.4"/><rect x="345.50" y="209.12" width="1.4" height="1.4"/><rect x="345.50" y="216.08" width="1.4" height="1.4"/><rect x="345.50" y="218.71" width="1.4" height="1.4"/><rect x="348.13" y="216.08" width="1.4" height="1.4"/><rect x="348.13" y="218.71" width="1.4" height="1.4"/><rect x="348.13" y="221.34" width="1.4" height="1.4"/><rect x="348.13" y="223.97" width="1.4" height="1.4"/><rect x="351.62" y="230.93" width="1.4" height="1.4"/><rect x="351.62" y="233.56" width="1.4" height="1.4"/><rect x="354.25" y="216.08" width="1.4" height="1.4"/><rect x="354.25" y="218.71" width="1.4" height="1.4"/><rect x="354.25" y="221.34" width="1.4" height="1.4"/><rect x="354.25" y="223.97" width="1.4" height="1.4"/><rect x="357.73" y="206.49" width="1.4" height="1.4"/><rect x="357.73" y="209.12" width="1.4" height="1.4"/><rect x="360.36" y="206.49" width="1.4" height="1.4"/><rect x="363.85" y="206.49" width="1.4" height="1.4"/><rect x="366.48" y="206.49" width="1.4" height="1.4"/><rect x="366.48" y="209.12" width="1.4" height="1.4"/><rect x="366.48" y="216.08" width="1.4" height="1.4"/><rect x="366.48" y="218.71" width="1.4" height="1.4"/><rect x="369.97" y="221.34" width="1.4" height="1.4"/><rect x="369.97" y="223.97" width="1.4" height="1.4"/><rect x="369.97" y="230.93" width="1.4" height="1.4"/><rect x="369.97" y="233.56" width="1.4" height="1.4"/><rect x="372.60" y="216.08" width="1.4" height="1.4"/><rect x="372.60" y="218.71" width="1.4" height="1.4"/><rect x="372.60" y="221.34" width="1.4" height="1.4"/><rect x="372.60" y="223.97" width="1.4" height="1.4"/><rect x="376.08" y="206.49" width="1.4" height="1.4"/><rect x="376.08" y="209.12" width="1.4" height="1.4"/><rect x="378.71" y="206.49" width="1.4" height="1.4"/><rect x="382.20" y="194.27" width="1.4" height="1.4"/><rect x="382.20" y="201.23" width="1.4" height="1.4"/><rect x="382.20" y="203.86" width="1.4" height="1.4"/><rect x="382.20" y="206.49" width="1.4" height="1.4"/><rect x="384.83" y="176.79" width="1.4" height="1.4"/><rect x="384.83" y="179.42" width="1.4" height="1.4"/><rect x="384.83" y="186.38" width="1.4" height="1.4"/><rect x="384.83" y="189.01" width="1.4" height="1.4"/><rect x="384.83" y="191.64" width="1.4" height="1.4"/><rect x="388.32" y="176.79" width="1.4" height="1.4"/><rect x="390.95" y="176.79" width="1.4" height="1.4"/><rect x="390.95" y="179.42" width="1.4" height="1.4"/><rect x="390.95" y="186.38" width="1.4" height="1.4"/><rect x="394.43" y="189.01" width="1.4" height="1.4"/><rect x="394.43" y="191.64" width="1.4" height="1.4"/><rect x="394.43" y="194.27" width="1.4" height="1.4"/><rect x="394.43" y="201.23" width="1.4" height="1.4"/><rect x="397.06" y="203.86" width="1.4" height="1.4"/><rect x="397.06" y="206.49" width="1.4" height="1.4"/><rect x="400.55" y="206.49" width="1.4" height="1.4"/><rect x="400.55" y="209.12" width="1.4" height="1.4"/><rect x="403.18" y="216.08" width="1.4" height="1.4"/><rect x="403.18" y="218.71" width="1.4" height="1.4"/><rect x="403.18" y="221.34" width="1.4" height="1.4"/><rect x="403.18" y="223.97" width="1.4" height="1.4"/><rect x="406.67" y="221.34" width="1.4" height="1.4"/><rect x="406.67" y="223.97" width="1.4" height="1.4"/><rect x="406.67" y="230.93" width="1.4" height="1.4"/><rect x="406.67" y="233.56" width="1.4" height="1.4"/><rect x="409.30" y="206.49" width="1.4" height="1.4"/><rect x="409.30" y="209.12" width="1.4" height="1.4"/><rect x="409.30" y="216.08" width="1.4" height="1.4"/><rect x="409.30" y="218.71" width="1.4" height="1.4"/><rect x="412.78" y="216.08" width="1.4" height="1.4"/><rect x="412.78" y="218.71" width="1.4" height="1.4"/><rect x="412.78" y="221.34" width="1.4" height="1.4"/><rect x="412.78" y="223.97" width="1.4" height="1.4"/><rect x="415.41" y="230.93" width="1.4" height="1.4"/><rect x="415.41" y="233.56" width="1.4" height="1.4"/><rect x="418.90" y="216.08" width="1.4" height="1.4"/><rect x="418.90" y="218.71" width="1.4" height="1.4"/><rect x="418.90" y="221.34" width="1.4" height="1.4"/><rect x="418.90" y="223.97" width="1.4" height="1.4"/><rect x="421.53" y="206.49" width="1.4" height="1.4"/><rect x="421.53" y="209.12" width="1.4" height="1.4"/><rect x="425.02" y="206.49" width="1.4" height="1.4"/><rect x="427.65" y="206.49" width="1.4" height="1.4"/><rect x="431.13" y="206.49" width="1.4" height="1.4"/><rect x="431.13" y="209.12" width="1.4" height="1.4"/><rect x="431.13" y="216.08" width="1.4" height="1.4"/><rect x="431.13" y="218.71" width="1.4" height="1.4"/><rect x="433.76" y="221.34" width="1.4" height="1.4"/><rect x="433.76" y="223.97" width="1.4" height="1.4"/><rect x="433.76" y="230.93" width="1.4" height="1.4"/><rect x="433.76" y="233.56" width="1.4" height="1.4"/><rect x="437.25" y="216.08" width="1.4" height="1.4"/><rect x="437.25" y="218.71" width="1.4" height="1.4"/><rect x="437.25" y="221.34" width="1.4" height="1.4"/><rect x="437.25" y="223.97" width="1.4" height="1.4"/><rect x="439.88" y="206.49" width="1.4" height="1.4"/><rect x="439.88" y="209.12" width="1.4" height="1.4"/><rect x="443.37" y="206.49" width="1.4" height="1.4"/><rect x="446.00" y="206.49" width="1.4" height="1.4"/><rect x="449.48" y="206.49" width="1.4" height="1.4"/><rect x="452.11" y="206.49" width="1.4" height="1.4"/><rect x="455.60" y="206.49" width="1.4" height="1.4"/><rect x="458.23" y="206.49" width="1.4" height="1.4"/><rect x="461.72" y="206.49" width="1.4" height="1.4"/><rect x="464.35" y="206.49" width="1.4" height="1.4"/><rect x="467.83" y="206.49" width="1.4" height="1.4"/><rect x="470.46" y="206.49" width="1.4" height="1.4"/><rect x="470.46" y="209.12" width="1.4" height="1.4"/><rect x="470.46" y="216.08" width="1.4" height="1.4"/><rect x="470.46" y="218.71" width="1.4" height="1.4"/><rect x="473.95" y="221.34" width="1.4" height="1.4"/><rect x="473.95" y="223.97" width="1.4" height="1.4"/><rect x="473.95" y="230.93" width="1.4" height="1.4"/><rect x="473.95" y="233.56" width="1.4" height="1.4"/><rect x="476.58" y="233.56" width="1.4" height="1.4"/><rect x="480.06" y="230.93" width="1.4" height="1.4"/><rect x="480.06" y="233.56" width="1.4" height="1.4"/><rect x="482.69" y="216.08" width="1.4" height="1.4"/><rect x="482.69" y="218.71" width="1.4" height="1.4"/><rect x="482.69" y="221.34" width="1.4" height="1.4"/><rect x="482.69" y="223.97" width="1.4" height="1.4"/><rect x="486.18" y="206.49" width="1.4" height="1.4"/><rect x="486.18" y="209.12" width="1.4" height="1.4"/><rect x="488.81" y="206.49" width="1.4" height="1.4"/><rect x="492.30" y="206.49" width="1.4" height="1.4"/><rect x="494.93" y="206.49" width="1.4" height="1.4"/><rect x="494.93" y="209.12" width="1.4" height="1.4"/><rect x="494.93" y="216.08" width="1.4" height="1.4"/><rect x="494.93" y="218.71" width="1.4" height="1.4"/><rect x="498.41" y="221.34" width="1.4" height="1.4"/><rect x="498.41" y="223.97" width="1.4" height="1.4"/><rect x="498.41" y="230.93" width="1.4" height="1.4"/><rect x="498.41" y="233.56" width="1.4" height="1.4"/><rect x="501.04" y="216.08" width="1.4" height="1.4"/><rect x="501.04" y="218.71" width="1.4" height="1.4"/><rect x="501.04" y="221.34" width="1.4" height="1.4"/><rect x="501.04" y="223.97" width="1.4" height="1.4"/><rect x="504.53" y="206.49" width="1.4" height="1.4"/><rect x="504.53" y="209.12" width="1.4" height="1.4"/><rect x="507.16" y="216.08" width="1.4" height="1.4"/><rect x="507.16" y="218.71" width="1.4" height="1.4"/><rect x="507.16" y="221.34" width="1.4" height="1.4"/><rect x="507.16" y="223.97" width="1.4" height="1.4"/><rect x="510.65" y="221.34" width="1.4" height="1.4"/><rect x="510.65" y="223.97" width="1.4" height="1.4"/><rect x="510.65" y="230.93" width="1.4" height="1.4"/><rect x="510.65" y="233.56" width="1.4" height="1.4"/><rect x="513.28" y="206.49" width="1.4" height="1.4"/><rect x="513.28" y="209.12" width="1.4" height="1.4"/><rect x="513.28" y="216.08" width="1.4" height="1.4"/><rect x="513.28" y="218.71" width="1.4" height="1.4"/><rect x="516.76" y="206.49" width="1.4" height="1.4"/><rect x="519.39" y="206.49" width="1.4" height="1.4"/><rect x="522.88" y="203.86" width="1.4" height="1.4"/><rect x="522.88" y="206.49" width="1.4" height="1.4"/><rect x="525.51" y="189.01" width="1.4" height="1.4"/><rect x="525.51" y="191.64" width="1.4" height="1.4"/><rect x="525.51" y="194.27" width="1.4" height="1.4"/><rect x="525.51" y="201.23" width="1.4" height="1.4"/><rect x="529.00" y="176.79" width="1.4" height="1.4"/><rect x="529.00" y="179.42" width="1.4" height="1.4"/><rect x="529.00" y="186.38" width="1.4" height="1.4"/><rect x="531.63" y="189.01" width="1.4" height="1.4"/><rect x="531.63" y="191.64" width="1.4" height="1.4"/><rect x="531.63" y="194.27" width="1.4" height="1.4"/><rect x="531.63" y="201.23" width="1.4" height="1.4"/><rect x="535.11" y="203.86" width="1.4" height="1.4"/><rect x="535.11" y="206.49" width="1.4" height="1.4"/><rect x="535.11" y="209.12" width="1.4" height="1.4"/><rect x="535.11" y="216.08" width="1.4" height="1.4"/><rect x="535.11" y="218.71" width="1.4" height="1.4"/><rect x="537.74" y="221.34" width="1.4" height="1.4"/><rect x="537.74" y="223.97" width="1.4" height="1.4"/><rect x="537.74" y="230.93" width="1.4" height="1.4"/><rect x="537.74" y="233.56" width="1.4" height="1.4"/><rect x="541.23" y="216.08" width="1.4" height="1.4"/><rect x="541.23" y="218.71" width="1.4" height="1.4"/><rect x="541.23" y="221.34" width="1.4" height="1.4"/><rect x="541.23" y="223.97" width="1.4" height="1.4"/><rect x="543.86" y="206.49" width="1.4" height="1.4"/><rect x="543.86" y="209.12" width="1.4" height="1.4"/><rect x="547.35" y="206.49" width="1.4" height="1.4"/><rect x="549.98" y="206.49" width="1.4" height="1.4"/><rect x="553.46" y="203.86" width="1.4" height="1.4"/><rect x="553.46" y="206.49" width="1.4" height="1.4"/><rect x="556.09" y="189.01" width="1.4" height="1.4"/><rect x="556.09" y="191.64" width="1.4" height="1.4"/><rect x="556.09" y="194.27" width="1.4" height="1.4"/><rect x="556.09" y="201.23" width="1.4" height="1.4"/><rect x="559.58" y="176.79" width="1.4" height="1.4"/><rect x="559.58" y="179.42" width="1.4" height="1.4"/><rect x="559.58" y="186.38" width="1.4" height="1.4"/><rect x="559.58" y="189.01" width="1.4" height="1.4"/><rect x="559.58" y="191.64" width="1.4" height="1.4"/><rect x="562.21" y="194.27" width="1.4" height="1.4"/><rect x="562.21" y="201.23" width="1.4" height="1.4"/><rect x="562.21" y="203.86" width="1.4" height="1.4"/><rect x="562.21" y="206.49" width="1.4" height="1.4"/><rect x="562.21" y="209.12" width="1.4" height="1.4"/><rect x="565.70" y="216.08" width="1.4" height="1.4"/><rect x="565.70" y="218.71" width="1.4" height="1.4"/><rect x="565.70" y="221.34" width="1.4" height="1.4"/><rect x="565.70" y="223.97" width="1.4" height="1.4"/><rect x="568.33" y="230.93" width="1.4" height="1.4"/><rect x="568.33" y="233.56" width="1.4" height="1.4"/><rect x="571.81" y="216.08" width="1.4" height="1.4"/><rect x="571.81" y="218.71" width="1.4" height="1.4"/><rect x="571.81" y="221.34" width="1.4" height="1.4"/><rect x="571.81" y="223.97" width="1.4" height="1.4"/><rect x="574.44" y="206.49" width="1.4" height="1.4"/><rect x="574.44" y="209.12" width="1.4" height="1.4"/><rect x="574.44" y="216.08" width="1.4" height="1.4"/><rect x="574.44" y="218.71" width="1.4" height="1.4"/><rect x="577.93" y="221.34" width="1.4" height="1.4"/><rect x="577.93" y="223.97" width="1.4" height="1.4"/><rect x="577.93" y="230.93" width="1.4" height="1.4"/><rect x="577.93" y="233.56" width="1.4" height="1.4"/><rect x="580.56" y="191.64" width="1.4" height="1.4"/><rect x="580.56" y="194.27" width="1.4" height="1.4"/><rect x="580.56" y="201.23" width="1.4" height="1.4"/><rect x="580.56" y="203.86" width="1.4" height="1.4"/><rect x="580.56" y="206.49" width="1.4" height="1.4"/><rect x="580.56" y="209.12" width="1.4" height="1.4"/><rect x="580.56" y="216.08" width="1.4" height="1.4"/><rect x="580.56" y="218.71" width="1.4" height="1.4"/><rect x="584.05" y="176.79" width="1.4" height="1.4"/><rect x="584.05" y="179.42" width="1.4" height="1.4"/><rect x="584.05" y="186.38" width="1.4" height="1.4"/><rect x="584.05" y="189.01" width="1.4" height="1.4"/><rect x="584.05" y="191.64" width="1.4" height="1.4"/><rect x="586.68" y="194.27" width="1.4" height="1.4"/><rect x="586.68" y="201.23" width="1.4" height="1.4"/><rect x="586.68" y="203.86" width="1.4" height="1.4"/><rect x="586.68" y="206.49" width="1.4" height="1.4"/><rect x="590.16" y="189.01" width="1.4" height="1.4"/><rect x="590.16" y="191.64" width="1.4" height="1.4"/><rect x="590.16" y="194.27" width="1.4" height="1.4"/><rect x="590.16" y="201.23" width="1.4" height="1.4"/><rect x="592.79" y="176.79" width="1.4" height="1.4"/><rect x="592.79" y="179.42" width="1.4" height="1.4"/><rect x="592.79" y="186.38" width="1.4" height="1.4"/><rect x="592.79" y="189.01" width="1.4" height="1.4"/><rect x="596.28" y="191.64" width="1.4" height="1.4"/><rect x="596.28" y="194.27" width="1.4" height="1.4"/><rect x="596.28" y="201.23" width="1.4" height="1.4"/><rect x="596.28" y="203.86" width="1.4" height="1.4"/><rect x="596.28" y="206.49" width="1.4" height="1.4"/><rect x="596.28" y="209.12" width="1.4" height="1.4"/><rect x="596.28" y="216.08" width="1.4" height="1.4"/><rect x="596.28" y="218.71" width="1.4" height="1.4"/><rect x="598.91" y="221.34" width="1.4" height="1.4"/><rect x="598.91" y="223.97" width="1.4" height="1.4"/><rect x="598.91" y="230.93" width="1.4" height="1.4"/><rect x="598.91" y="233.56" width="1.4" height="1.4"/><rect x="602.40" y="230.93" width="1.4" height="1.4"/><rect x="602.40" y="233.56" width="1.4" height="1.4"/><rect x="605.03" y="216.08" width="1.4" height="1.4"/><rect x="605.03" y="218.71" width="1.4" height="1.4"/><rect x="605.03" y="221.34" width="1.4" height="1.4"/><rect x="605.03" y="223.97" width="1.4" height="1.4"/><rect x="608.51" y="206.49" width="1.4" height="1.4"/><rect x="608.51" y="209.12" width="1.4" height="1.4"/><rect x="611.14" y="206.49" width="1.4" height="1.4"/><rect x="611.14" y="209.12" width="1.4" height="1.4"/><rect x="611.14" y="216.08" width="1.4" height="1.4"/><rect x="611.14" y="218.71" width="1.4" height="1.4"/><rect x="614.63" y="221.34" width="1.4" height="1.4"/><rect x="614.63" y="223.97" width="1.4" height="1.4"/><rect x="614.63" y="230.93" width="1.4" height="1.4"/><rect x="614.63" y="233.56" width="1.4" height="1.4"/><rect x="614.63" y="236.19" width="1.4" height="1.4"/><rect x="614.63" y="238.81" width="1.4" height="1.4"/><rect x="614.63" y="245.77" width="1.4" height="1.4"/><rect x="614.63" y="248.40" width="1.4" height="1.4"/><rect x="617.26" y="251.03" width="1.4" height="1.4"/><rect x="617.26" y="253.66" width="1.4" height="1.4"/><rect x="617.26" y="260.62" width="1.4" height="1.4"/><rect x="617.26" y="263.25" width="1.4" height="1.4"/><rect x="620.75" y="221.34" width="1.4" height="1.4"/><rect x="620.75" y="223.97" width="1.4" height="1.4"/><rect x="620.75" y="230.93" width="1.4" height="1.4"/><rect x="620.75" y="233.56" width="1.4" height="1.4"/><rect x="620.75" y="236.19" width="1.4" height="1.4"/><rect x="620.75" y="238.81" width="1.4" height="1.4"/><rect x="620.75" y="245.77" width="1.4" height="1.4"/><rect x="620.75" y="248.40" width="1.4" height="1.4"/><rect x="623.38" y="206.49" width="1.4" height="1.4"/><rect x="623.38" y="209.12" width="1.4" height="1.4"/><rect x="623.38" y="216.08" width="1.4" height="1.4"/><rect x="623.38" y="218.71" width="1.4" height="1.4"/><rect x="626.86" y="206.49" width="1.4" height="1.4"/><rect x="629.49" y="206.49" width="1.4" height="1.4"/><rect x="632.98" y="206.49" width="1.4" height="1.4"/><rect x="635.61" y="206.49" width="1.4" height="1.4"/><rect x="639.10" y="206.49" width="1.4" height="1.4"/><rect x="641.73" y="206.49" width="1.4" height="1.4"/><rect x="645.21" y="206.49" width="1.4" height="1.4"/><rect x="647.84" y="206.49" width="1.4" height="1.4"/><rect x="651.33" y="206.49" width="1.4" height="1.4"/><rect x="653.96" y="206.49" width="1.4" height="1.4"/><rect x="657.45" y="206.49" width="1.4" height="1.4"/><rect x="660.08" y="206.49" width="1.4" height="1.4"/><rect x="663.56" y="206.49" width="1.4" height="1.4"/><rect x="663.56" y="209.12" width="1.4" height="1.4"/><rect x="663.56" y="216.08" width="1.4" height="1.4"/><rect x="663.56" y="218.71" width="1.4" height="1.4"/><rect x="666.19" y="221.34" width="1.4" height="1.4"/><rect x="666.19" y="223.97" width="1.4" height="1.4"/><rect x="666.19" y="230.93" width="1.4" height="1.4"/><rect x="666.19" y="233.56" width="1.4" height="1.4"/><rect x="669.68" y="216.08" width="1.4" height="1.4"/><rect x="669.68" y="218.71" width="1.4" height="1.4"/><rect x="669.68" y="221.34" width="1.4" height="1.4"/><rect x="669.68" y="223.97" width="1.4" height="1.4"/><rect x="672.31" y="206.49" width="1.4" height="1.4"/><rect x="672.31" y="209.12" width="1.4" height="1.4"/><rect x="675.80" y="206.49" width="1.4" height="1.4"/><rect x="678.43" y="206.49" width="1.4" height="1.4"/><rect x="681.91" y="206.49" width="1.4" height="1.4"/><rect x="684.54" y="206.49" width="1.4" height="1.4"/><rect x="688.03" y="194.27" width="1.4" height="1.4"/><rect x="688.03" y="201.23" width="1.4" height="1.4"/><rect x="688.03" y="203.86" width="1.4" height="1.4"/><rect x="688.03" y="206.49" width="1.4" height="1.4"/><rect x="690.66" y="176.79" width="1.4" height="1.4"/><rect x="690.66" y="179.42" width="1.4" height="1.4"/><rect x="690.66" y="186.38" width="1.4" height="1.4"/><rect x="690.66" y="189.01" width="1.4" height="1.4"/><rect x="690.66" y="191.64" width="1.4" height="1.4"/><rect x="694.15" y="191.64" width="1.4" height="1.4"/><rect x="694.15" y="194.27" width="1.4" height="1.4"/><rect x="694.15" y="201.23" width="1.4" height="1.4"/><rect x="694.15" y="203.86" width="1.4" height="1.4"/><rect x="694.15" y="206.49" width="1.4" height="1.4"/><rect x="694.15" y="209.12" width="1.4" height="1.4"/><rect x="694.15" y="216.08" width="1.4" height="1.4"/><rect x="694.15" y="218.71" width="1.4" height="1.4"/><rect x="696.78" y="221.34" width="1.4" height="1.4"/><rect x="696.78" y="223.97" width="1.4" height="1.4"/><rect x="696.78" y="230.93" width="1.4" height="1.4"/><rect x="696.78" y="233.56" width="1.4" height="1.4"/><rect x="700.26" y="191.64" width="1.4" height="1.4"/><rect x="700.26" y="194.27" width="1.4" height="1.4"/><rect x="700.26" y="201.23" width="1.4" height="1.4"/><rect x="700.26" y="203.86" width="1.4" height="1.4"/><rect x="700.26" y="206.49" width="1.4" height="1.4"/><rect x="700.26" y="209.12" width="1.4" height="1.4"/><rect x="700.26" y="216.08" width="1.4" height="1.4"/><rect x="700.26" y="218.71" width="1.4" height="1.4"/><rect x="702.89" y="176.79" width="1.4" height="1.4"/><rect x="702.89" y="179.42" width="1.4" height="1.4"/><rect x="702.89" y="186.38" width="1.4" height="1.4"/><rect x="702.89" y="189.01" width="1.4" height="1.4"/><rect x="706.38" y="176.79" width="1.4" height="1.4"/><rect x="706.38" y="179.42" width="1.4" height="1.4"/><rect x="706.38" y="186.38" width="1.4" height="1.4"/><rect x="706.38" y="189.01" width="1.4" height="1.4"/><rect x="709.01" y="191.64" width="1.4" height="1.4"/><rect x="709.01" y="194.27" width="1.4" height="1.4"/><rect x="709.01" y="201.23" width="1.4" height="1.4"/><rect x="709.01" y="203.86" width="1.4" height="1.4"/><rect x="709.01" y="206.49" width="1.4" height="1.4"/><rect x="709.01" y="209.12" width="1.4" height="1.4"/><rect x="709.01" y="216.08" width="1.4" height="1.4"/><rect x="709.01" y="218.71" width="1.4" height="1.4"/><rect x="712.50" y="221.34" width="1.4" height="1.4"/><rect x="712.50" y="223.97" width="1.4" height="1.4"/><rect x="712.50" y="230.93" width="1.4" height="1.4"/><rect x="712.50" y="233.56" width="1.4" height="1.4"/><rect x="715.13" y="230.93" width="1.4" height="1.4"/><rect x="715.13" y="233.56" width="1.4" height="1.4"/><rect x="718.61" y="216.08" width="1.4" height="1.4"/><rect x="718.61" y="218.71" width="1.4" height="1.4"/><rect x="718.61" y="221.34" width="1.4" height="1.4"/><rect x="718.61" y="223.97" width="1.4" height="1.4"/><rect x="721.24" y="206.49" width="1.4" height="1.4"/><rect x="721.24" y="209.12" width="1.4" height="1.4"/><rect x="724.73" y="206.49" width="1.4" height="1.4"/><rect x="727.36" y="206.49" width="1.4" height="1.4"/><rect x="730.85" y="206.49" width="1.4" height="1.4"/><rect x="733.48" y="206.49" width="1.4" height="1.4"/><rect x="736.96" y="206.49" width="1.4" height="1.4"/><rect x="736.96" y="209.12" width="1.4" height="1.4"/><rect x="736.96" y="216.08" width="1.4" height="1.4"/><rect x="736.96" y="218.71" width="1.4" height="1.4"/><rect x="736.96" y="221.34" width="1.4" height="1.4"/><rect x="736.96" y="223.97" width="1.4" height="1.4"/><rect x="736.96" y="230.93" width="1.4" height="1.4"/><rect x="736.96" y="233.56" width="1.4" height="1.4"/><rect x="739.59" y="236.19" width="1.4" height="1.4"/><rect x="739.59" y="238.81" width="1.4" height="1.4"/><rect x="739.59" y="245.77" width="1.4" height="1.4"/><rect x="739.59" y="248.40" width="1.4" height="1.4"/><rect x="739.59" y="251.03" width="1.4" height="1.4"/><rect x="739.59" y="253.66" width="1.4" height="1.4"/><rect x="739.59" y="260.62" width="1.4" height="1.4"/><rect x="739.59" y="263.25" width="1.4" height="1.4"/><rect x="743.08" y="245.77" width="1.4" height="1.4"/><rect x="743.08" y="248.40" width="1.4" height="1.4"/><rect x="743.08" y="251.03" width="1.4" height="1.4"/><rect x="743.08" y="253.66" width="1.4" height="1.4"/><rect x="745.71" y="221.34" width="1.4" height="1.4"/><rect x="745.71" y="223.97" width="1.4" height="1.4"/><rect x="745.71" y="230.93" width="1.4" height="1.4"/><rect x="745.71" y="233.56" width="1.4" height="1.4"/><rect x="745.71" y="236.19" width="1.4" height="1.4"/><rect x="745.71" y="238.81" width="1.4" height="1.4"/><rect x="749.20" y="191.64" width="1.4" height="1.4"/><rect x="749.20" y="194.27" width="1.4" height="1.4"/><rect x="749.20" y="201.23" width="1.4" height="1.4"/><rect x="749.20" y="203.86" width="1.4" height="1.4"/><rect x="749.20" y="206.49" width="1.4" height="1.4"/><rect x="749.20" y="209.12" width="1.4" height="1.4"/><rect x="749.20" y="216.08" width="1.4" height="1.4"/><rect x="749.20" y="218.71" width="1.4" height="1.4"/><rect x="751.83" y="176.79" width="1.4" height="1.4"/><rect x="751.83" y="179.42" width="1.4" height="1.4"/><rect x="751.83" y="186.38" width="1.4" height="1.4"/><rect x="751.83" y="189.01" width="1.4" height="1.4"/><rect x="751.83" y="191.64" width="1.4" height="1.4"/><rect x="755.31" y="194.27" width="1.4" height="1.4"/><rect x="755.31" y="201.23" width="1.4" height="1.4"/><rect x="755.31" y="203.86" width="1.4" height="1.4"/><rect x="755.31" y="206.49" width="1.4" height="1.4"/><rect x="757.94" y="164.58" width="1.4" height="1.4"/><rect x="757.94" y="171.53" width="1.4" height="1.4"/><rect x="757.94" y="174.16" width="1.4" height="1.4"/><rect x="757.94" y="176.79" width="1.4" height="1.4"/><rect x="757.94" y="179.42" width="1.4" height="1.4"/><rect x="757.94" y="186.38" width="1.4" height="1.4"/><rect x="757.94" y="189.01" width="1.4" height="1.4"/><rect x="757.94" y="191.64" width="1.4" height="1.4"/><rect x="761.43" y="147.10" width="1.4" height="1.4"/><rect x="761.43" y="149.73" width="1.4" height="1.4"/><rect x="761.43" y="156.69" width="1.4" height="1.4"/><rect x="761.43" y="159.32" width="1.4" height="1.4"/><rect x="761.43" y="161.95" width="1.4" height="1.4"/><rect x="761.43" y="164.58" width="1.4" height="1.4"/><rect x="761.43" y="171.53" width="1.4" height="1.4"/><rect x="761.43" y="174.16" width="1.4" height="1.4"/><rect x="761.43" y="176.79" width="1.4" height="1.4"/><rect x="764.06" y="179.42" width="1.4" height="1.4"/><rect x="764.06" y="186.38" width="1.4" height="1.4"/><rect x="764.06" y="189.01" width="1.4" height="1.4"/><rect x="764.06" y="191.64" width="1.4" height="1.4"/><rect x="764.06" y="194.27" width="1.4" height="1.4"/><rect x="764.06" y="201.23" width="1.4" height="1.4"/><rect x="764.06" y="203.86" width="1.4" height="1.4"/><rect x="764.06" y="206.49" width="1.4" height="1.4"/><rect x="767.54" y="206.49" width="1.4" height="1.4"/><rect x="770.17" y="206.49" width="1.4" height="1.4"/><rect x="773.66" y="206.49" width="1.4" height="1.4"/><rect x="776.29" y="206.49" width="1.4" height="1.4"/><rect x="776.29" y="209.12" width="1.4" height="1.4"/><rect x="776.29" y="216.08" width="1.4" height="1.4"/><rect x="776.29" y="218.71" width="1.4" height="1.4"/><rect x="779.78" y="221.34" width="1.4" height="1.4"/><rect x="779.78" y="223.97" width="1.4" height="1.4"/><rect x="779.78" y="230.93" width="1.4" height="1.4"/><rect x="779.78" y="233.56" width="1.4" height="1.4"/><rect x="782.41" y="216.08" width="1.4" height="1.4"/><rect x="782.41" y="218.71" width="1.4" height="1.4"/><rect x="782.41" y="221.34" width="1.4" height="1.4"/><rect x="782.41" y="223.97" width="1.4" height="1.4"/><rect x="785.89" y="206.49" width="1.4" height="1.4"/><rect x="785.89" y="209.12" width="1.4" height="1.4"/><rect x="788.52" y="216.08" width="1.4" height="1.4"/><rect x="788.52" y="218.71" width="1.4" height="1.4"/><rect x="788.52" y="221.34" width="1.4" height="1.4"/><rect x="788.52" y="223.97" width="1.4" height="1.4"/><rect x="792.01" y="221.34" width="1.4" height="1.4"/><rect x="792.01" y="223.97" width="1.4" height="1.4"/><rect x="792.01" y="230.93" width="1.4" height="1.4"/><rect x="792.01" y="233.56" width="1.4" height="1.4"/><rect x="794.64" y="206.49" width="1.4" height="1.4"/><rect x="794.64" y="209.12" width="1.4" height="1.4"/><rect x="794.64" y="216.08" width="1.4" height="1.4"/><rect x="794.64" y="218.71" width="1.4" height="1.4"/><rect x="798.13" y="206.49" width="1.4" height="1.4"/><rect x="800.76" y="201.23" width="1.4" height="1.4"/><rect x="800.76" y="203.86" width="1.4" height="1.4"/><rect x="800.76" y="206.49" width="1.4" height="1.4"/><rect x="804.24" y="161.95" width="1.4" height="1.4"/><rect x="804.24" y="164.58" width="1.4" height="1.4"/><rect x="804.24" y="171.53" width="1.4" height="1.4"/><rect x="804.24" y="174.16" width="1.4" height="1.4"/><rect x="804.24" y="176.79" width="1.4" height="1.4"/><rect x="804.24" y="179.42" width="1.4" height="1.4"/><rect x="804.24" y="186.38" width="1.4" height="1.4"/><rect x="804.24" y="189.01" width="1.4" height="1.4"/><rect x="804.24" y="191.64" width="1.4" height="1.4"/><rect x="804.24" y="194.27" width="1.4" height="1.4"/><rect x="806.87" y="117.40" width="1.4" height="1.4"/><rect x="806.87" y="120.03" width="1.4" height="1.4"/><rect x="806.87" y="126.99" width="1.4" height="1.4"/><rect x="806.87" y="129.62" width="1.4" height="1.4"/><rect x="806.87" y="132.25" width="1.4" height="1.4"/><rect x="806.87" y="134.88" width="1.4" height="1.4"/><rect x="806.87" y="141.84" width="1.4" height="1.4"/><rect x="806.87" y="144.47" width="1.4" height="1.4"/><rect x="806.87" y="147.10" width="1.4" height="1.4"/><rect x="806.87" y="149.73" width="1.4" height="1.4"/><rect x="806.87" y="156.69" width="1.4" height="1.4"/><rect x="806.87" y="159.32" width="1.4" height="1.4"/><rect x="810.36" y="90.34" width="1.4" height="1.4"/><rect x="810.36" y="97.29" width="1.4" height="1.4"/><rect x="810.36" y="99.92" width="1.4" height="1.4"/><rect x="810.36" y="102.55" width="1.4" height="1.4"/><rect x="810.36" y="105.18" width="1.4" height="1.4"/><rect x="810.36" y="112.14" width="1.4" height="1.4"/><rect x="810.36" y="114.77" width="1.4" height="1.4"/><rect x="810.36" y="117.40" width="1.4" height="1.4"/><rect x="810.36" y="120.03" width="1.4" height="1.4"/><rect x="810.36" y="126.99" width="1.4" height="1.4"/><rect x="812.99" y="129.62" width="1.4" height="1.4"/><rect x="812.99" y="132.25" width="1.4" height="1.4"/><rect x="812.99" y="134.88" width="1.4" height="1.4"/><rect x="812.99" y="141.84" width="1.4" height="1.4"/><rect x="812.99" y="144.47" width="1.4" height="1.4"/><rect x="812.99" y="147.10" width="1.4" height="1.4"/><rect x="812.99" y="149.73" width="1.4" height="1.4"/><rect x="812.99" y="156.69" width="1.4" height="1.4"/><rect x="812.99" y="159.32" width="1.4" height="1.4"/><rect x="812.99" y="161.95" width="1.4" height="1.4"/><rect x="812.99" y="164.58" width="1.4" height="1.4"/><rect x="812.99" y="171.53" width="1.4" height="1.4"/><rect x="812.99" y="174.16" width="1.4" height="1.4"/><rect x="812.99" y="176.79" width="1.4" height="1.4"/><rect x="812.99" y="179.42" width="1.4" height="1.4"/><rect x="812.99" y="186.38" width="1.4" height="1.4"/><rect x="812.99" y="189.01" width="1.4" height="1.4"/><rect x="812.99" y="191.64" width="1.4" height="1.4"/><rect x="812.99" y="194.27" width="1.4" height="1.4"/><rect x="816.48" y="201.23" width="1.4" height="1.4"/><rect x="816.48" y="203.86" width="1.4" height="1.4"/><rect x="816.48" y="206.49" width="1.4" height="1.4"/><rect x="816.48" y="209.12" width="1.4" height="1.4"/><rect x="816.48" y="216.08" width="1.4" height="1.4"/><rect x="816.48" y="218.71" width="1.4" height="1.4"/><rect x="816.48" y="221.34" width="1.4" height="1.4"/><rect x="816.48" y="223.97" width="1.4" height="1.4"/><rect x="816.48" y="230.93" width="1.4" height="1.4"/><rect x="816.48" y="233.56" width="1.4" height="1.4"/><rect x="819.11" y="176.79" width="1.4" height="1.4"/><rect x="819.11" y="179.42" width="1.4" height="1.4"/><rect x="819.11" y="186.38" width="1.4" height="1.4"/><rect x="819.11" y="189.01" width="1.4" height="1.4"/><rect x="819.11" y="191.64" width="1.4" height="1.4"/><rect x="819.11" y="194.27" width="1.4" height="1.4"/><rect x="819.11" y="201.23" width="1.4" height="1.4"/><rect x="819.11" y="203.86" width="1.4" height="1.4"/><rect x="822.59" y="191.64" width="1.4" height="1.4"/><rect x="822.59" y="194.27" width="1.4" height="1.4"/><rect x="822.59" y="201.23" width="1.4" height="1.4"/><rect x="822.59" y="203.86" width="1.4" height="1.4"/><rect x="822.59" y="206.49" width="1.4" height="1.4"/><rect x="822.59" y="209.12" width="1.4" height="1.4"/><rect x="822.59" y="216.08" width="1.4" height="1.4"/><rect x="822.59" y="218.71" width="1.4" height="1.4"/><rect x="825.22" y="221.34" width="1.4" height="1.4"/><rect x="825.22" y="223.97" width="1.4" height="1.4"/><rect x="825.22" y="230.93" width="1.4" height="1.4"/><rect x="825.22" y="233.56" width="1.4" height="1.4"/><rect x="828.71" y="206.49" width="1.4" height="1.4"/><rect x="828.71" y="209.12" width="1.4" height="1.4"/><rect x="828.71" y="216.08" width="1.4" height="1.4"/><rect x="828.71" y="218.71" width="1.4" height="1.4"/><rect x="831.34" y="206.49" width="1.4" height="1.4"/><rect x="834.83" y="206.49" width="1.4" height="1.4"/><rect x="837.46" y="206.49" width="1.4" height="1.4"/><rect x="840.94" y="206.49" width="1.4" height="1.4"/><rect x="840.94" y="209.12" width="1.4" height="1.4"/><rect x="840.94" y="216.08" width="1.4" height="1.4"/><rect x="840.94" y="218.71" width="1.4" height="1.4"/><rect x="843.57" y="221.34" width="1.4" height="1.4"/><rect x="843.57" y="223.97" width="1.4" height="1.4"/><rect x="843.57" y="230.93" width="1.4" height="1.4"/><rect x="843.57" y="233.56" width="1.4" height="1.4"/><rect x="847.06" y="216.08" width="1.4" height="1.4"/><rect x="847.06" y="218.71" width="1.4" height="1.4"/><rect x="847.06" y="221.34" width="1.4" height="1.4"/><rect x="847.06" y="223.97" width="1.4" height="1.4"/><rect x="849.69" y="206.49" width="1.4" height="1.4"/><rect x="849.69" y="209.12" width="1.4" height="1.4"/><rect x="853.18" y="206.49" width="1.4" height="1.4"/><rect x="855.81" y="194.27" width="1.4" height="1.4"/><rect x="855.81" y="201.23" width="1.4" height="1.4"/><rect x="855.81" y="203.86" width="1.4" height="1.4"/><rect x="855.81" y="206.49" width="1.4" height="1.4"/><rect x="859.29" y="176.79" width="1.4" height="1.4"/><rect x="859.29" y="179.42" width="1.4" height="1.4"/><rect x="859.29" y="186.38" width="1.4" height="1.4"/><rect x="859.29" y="189.01" width="1.4" height="1.4"/><rect x="859.29" y="191.64" width="1.4" height="1.4"/><rect x="861.92" y="191.64" width="1.4" height="1.4"/><rect x="861.92" y="194.27" width="1.4" height="1.4"/><rect x="861.92" y="201.23" width="1.4" height="1.4"/><rect x="861.92" y="203.86" width="1.4" height="1.4"/><rect x="861.92" y="206.49" width="1.4" height="1.4"/><rect x="861.92" y="209.12" width="1.4" height="1.4"/><rect x="861.92" y="216.08" width="1.4" height="1.4"/><rect x="861.92" y="218.71" width="1.4" height="1.4"/><rect x="865.41" y="221.34" width="1.4" height="1.4"/><rect x="865.41" y="223.97" width="1.4" height="1.4"/><rect x="865.41" y="230.93" width="1.4" height="1.4"/><rect x="865.41" y="233.56" width="1.4" height="1.4"/><rect x="868.04" y="206.49" width="1.4" height="1.4"/><rect x="868.04" y="209.12" width="1.4" height="1.4"/><rect x="868.04" y="216.08" width="1.4" height="1.4"/><rect x="868.04" y="218.71" width="1.4" height="1.4"/><rect x="871.53" y="206.49" width="1.4" height="1.4"/><rect x="874.16" y="206.49" width="1.4" height="1.4"/><rect x="874.16" y="209.12" width="1.4" height="1.4"/><rect x="877.64" y="216.08" width="1.4" height="1.4"/><rect x="877.64" y="218.71" width="1.4" height="1.4"/><rect x="877.64" y="221.34" width="1.4" height="1.4"/><rect x="877.64" y="223.97" width="1.4" height="1.4"/><rect x="880.27" y="221.34" width="1.4" height="1.4"/><rect x="880.27" y="223.97" width="1.4" height="1.4"/><rect x="880.27" y="230.93" width="1.4" height="1.4"/><rect x="880.27" y="233.56" width="1.4" height="1.4"/><rect x="883.76" y="206.49" width="1.4" height="1.4"/><rect x="883.76" y="209.12" width="1.4" height="1.4"/><rect x="883.76" y="216.08" width="1.4" height="1.4"/><rect x="883.76" y="218.71" width="1.4" height="1.4"/><rect x="886.39" y="216.08" width="1.4" height="1.4"/><rect x="886.39" y="218.71" width="1.4" height="1.4"/><rect x="886.39" y="221.34" width="1.4" height="1.4"/><rect x="886.39" y="223.97" width="1.4" height="1.4"/><rect x="889.88" y="221.34" width="1.4" height="1.4"/><rect x="889.88" y="223.97" width="1.4" height="1.4"/><rect x="889.88" y="230.93" width="1.4" height="1.4"/><rect x="889.88" y="233.56" width="1.4" height="1.4"/><rect x="892.51" y="206.49" width="1.4" height="1.4"/><rect x="892.51" y="209.12" width="1.4" height="1.4"/><rect x="892.51" y="216.08" width="1.4" height="1.4"/><rect x="892.51" y="218.71" width="1.4" height="1.4"/><rect x="895.99" y="206.49" width="1.4" height="1.4"/><rect x="898.62" y="203.86" width="1.4" height="1.4"/><rect x="898.62" y="206.49" width="1.4" height="1.4"/><rect x="902.11" y="189.01" width="1.4" height="1.4"/><rect x="902.11" y="191.64" width="1.4" height="1.4"/><rect x="902.11" y="194.27" width="1.4" height="1.4"/><rect x="902.11" y="201.23" width="1.4" height="1.4"/><rect x="904.74" y="176.79" width="1.4" height="1.4"/><rect x="904.74" y="179.42" width="1.4" height="1.4"/><rect x="904.74" y="186.38" width="1.4" height="1.4"/><rect x="908.23" y="176.79" width="1.4" height="1.4"/><rect x="910.86" y="176.79" width="1.4" height="1.4"/><rect x="914.34" y="176.79" width="1.4" height="1.4"/><rect x="916.97" y="176.79" width="1.4" height="1.4"/><rect x="916.97" y="179.42" width="1.4" height="1.4"/><rect x="916.97" y="186.38" width="1.4" height="1.4"/><rect x="920.46" y="189.01" width="1.4" height="1.4"/><rect x="920.46" y="191.64" width="1.4" height="1.4"/><rect x="920.46" y="194.27" width="1.4" height="1.4"/><rect x="920.46" y="201.23" width="1.4" height="1.4"/><rect x="923.09" y="203.86" width="1.4" height="1.4"/><rect x="923.09" y="206.49" width="1.4" height="1.4"/><rect x="926.58" y="206.49" width="1.4" height="1.4"/><rect x="929.21" y="206.49" width="1.4" height="1.4"/><rect x="932.69" y="206.49" width="1.4" height="1.4"/><rect x="935.32" y="206.49" width="1.4" height="1.4"/><rect x="938.81" y="206.49" width="1.4" height="1.4"/><rect x="941.44" y="206.49" width="1.4" height="1.4"/><rect x="944.93" y="206.49" width="1.4" height="1.4"/><rect x="947.56" y="203.86" width="1.4" height="1.4"/><rect x="947.56" y="206.49" width="1.4" height="1.4"/><rect x="951.04" y="189.01" width="1.4" height="1.4"/><rect x="951.04" y="191.64" width="1.4" height="1.4"/><rect x="951.04" y="194.27" width="1.4" height="1.4"/><rect x="951.04" y="201.23" width="1.4" height="1.4"/><rect x="953.67" y="176.79" width="1.4" height="1.4"/><rect x="953.67" y="179.42" width="1.4" height="1.4"/><rect x="953.67" y="186.38" width="1.4" height="1.4"/><rect x="957.16" y="176.79" width="1.4" height="1.4"/><rect x="957.16" y="179.42" width="1.4" height="1.4"/><rect x="957.16" y="186.38" width="1.4" height="1.4"/><rect x="959.79" y="189.01" width="1.4" height="1.4"/><rect x="959.79" y="191.64" width="1.4" height="1.4"/><rect x="959.79" y="194.27" width="1.4" height="1.4"/><rect x="959.79" y="201.23" width="1.4" height="1.4"/><rect x="963.28" y="203.86" width="1.4" height="1.4"/><rect x="963.28" y="206.49" width="1.4" height="1.4"/><rect x="965.91" y="206.49" width="1.4" height="1.4"/><rect x="969.39" y="206.49" width="1.4" height="1.4"/><rect x="972.02" y="206.49" width="1.4" height="1.4"/><rect x="972.02" y="209.12" width="1.4" height="1.4"/><rect x="975.51" y="216.08" width="1.4" height="1.4"/><rect x="975.51" y="218.71" width="1.4" height="1.4"/><rect x="975.51" y="221.34" width="1.4" height="1.4"/><rect x="975.51" y="223.97" width="1.4" height="1.4"/><rect x="978.14" y="221.34" width="1.4" height="1.4"/><rect x="978.14" y="223.97" width="1.4" height="1.4"/><rect x="978.14" y="230.93" width="1.4" height="1.4"/><rect x="978.14" y="233.56" width="1.4" height="1.4"/><rect x="981.63" y="206.49" width="1.4" height="1.4"/><rect x="981.63" y="209.12" width="1.4" height="1.4"/><rect x="981.63" y="216.08" width="1.4" height="1.4"/><rect x="981.63" y="218.71" width="1.4" height="1.4"/><rect x="984.26" y="206.49" width="1.4" height="1.4"/><rect x="987.74" y="203.86" width="1.4" height="1.4"/><rect x="987.74" y="206.49" width="1.4" height="1.4"/><rect x="990.37" y="189.01" width="1.4" height="1.4"/><rect x="990.37" y="191.64" width="1.4" height="1.4"/><rect x="990.37" y="194.27" width="1.4" height="1.4"/><rect x="990.37" y="201.23" width="1.4" height="1.4"/><rect x="993.86" y="176.79" width="1.4" height="1.4"/><rect x="993.86" y="179.42" width="1.4" height="1.4"/><rect x="993.86" y="186.38" width="1.4" height="1.4"/><rect x="993.86" y="189.01" width="1.4" height="1.4"/><rect x="993.86" y="191.64" width="1.4" height="1.4"/><rect x="996.49" y="194.27" width="1.4" height="1.4"/><rect x="996.49" y="201.23" width="1.4" height="1.4"/><rect x="996.49" y="203.86" width="1.4" height="1.4"/><rect x="996.49" y="206.49" width="1.4" height="1.4"/><rect x="999.98" y="164.58" width="1.4" height="1.4"/><rect x="999.98" y="171.53" width="1.4" height="1.4"/><rect x="999.98" y="174.16" width="1.4" height="1.4"/><rect x="999.98" y="176.79" width="1.4" height="1.4"/><rect x="999.98" y="179.42" width="1.4" height="1.4"/><rect x="999.98" y="186.38" width="1.4" height="1.4"/><rect x="999.98" y="189.01" width="1.4" height="1.4"/><rect x="999.98" y="191.64" width="1.4" height="1.4"/><rect x="1002.61" y="147.10" width="1.4" height="1.4"/><rect x="1002.61" y="149.73" width="1.4" height="1.4"/><rect x="1002.61" y="156.69" width="1.4" height="1.4"/><rect x="1002.61" y="159.32" width="1.4" height="1.4"/><rect x="1002.61" y="161.95" width="1.4" height="1.4"/><rect x="1006.09" y="147.10" width="1.4" height="1.4"/><rect x="1008.72" y="147.10" width="1.4" height="1.4"/><rect x="1008.72" y="149.73" width="1.4" height="1.4"/><rect x="1008.72" y="156.69" width="1.4" height="1.4"/><rect x="1008.72" y="159.32" width="1.4" height="1.4"/><rect x="1008.72" y="161.95" width="1.4" height="1.4"/><rect x="1008.72" y="164.58" width="1.4" height="1.4"/><rect x="1008.72" y="171.53" width="1.4" height="1.4"/><rect x="1008.72" y="174.16" width="1.4" height="1.4"/><rect x="1008.72" y="176.79" width="1.4" height="1.4"/><rect x="1012.21" y="179.42" width="1.4" height="1.4"/><rect x="1012.21" y="186.38" width="1.4" height="1.4"/><rect x="1012.21" y="189.01" width="1.4" height="1.4"/><rect x="1012.21" y="191.64" width="1.4" height="1.4"/><rect x="1012.21" y="194.27" width="1.4" height="1.4"/><rect x="1012.21" y="201.23" width="1.4" height="1.4"/><rect x="1012.21" y="203.86" width="1.4" height="1.4"/><rect x="1012.21" y="206.49" width="1.4" height="1.4"/><rect x="1014.84" y="206.49" width="1.4" height="1.4"/><rect x="1018.33" y="206.49" width="1.4" height="1.4"/><rect x="1018.33" y="209.12" width="1.4" height="1.4"/><rect x="1018.33" y="216.08" width="1.4" height="1.4"/><rect x="1018.33" y="218.71" width="1.4" height="1.4"/><rect x="1020.96" y="221.34" width="1.4" height="1.4"/><rect x="1020.96" y="223.97" width="1.4" height="1.4"/><rect x="1020.96" y="230.93" width="1.4" height="1.4"/><rect x="1020.96" y="233.56" width="1.4" height="1.4"/><rect x="1024.44" y="191.64" width="1.4" height="1.4"/><rect x="1024.44" y="194.27" width="1.4" height="1.4"/><rect x="1024.44" y="201.23" width="1.4" height="1.4"/><rect x="1024.44" y="203.86" width="1.4" height="1.4"/><rect x="1024.44" y="206.49" width="1.4" height="1.4"/><rect x="1024.44" y="209.12" width="1.4" height="1.4"/><rect x="1024.44" y="216.08" width="1.4" height="1.4"/><rect x="1024.44" y="218.71" width="1.4" height="1.4"/><rect x="1027.07" y="176.79" width="1.4" height="1.4"/><rect x="1027.07" y="179.42" width="1.4" height="1.4"/><rect x="1027.07" y="186.38" width="1.4" height="1.4"/><rect x="1027.07" y="189.01" width="1.4" height="1.4"/><rect x="1030.56" y="189.01" width="1.4" height="1.4"/><rect x="1030.56" y="191.64" width="1.4" height="1.4"/><rect x="1030.56" y="194.27" width="1.4" height="1.4"/><rect x="1030.56" y="201.23" width="1.4" height="1.4"/><rect x="1033.19" y="203.86" width="1.4" height="1.4"/><rect x="1033.19" y="206.49" width="1.4" height="1.4"/><rect x="1036.68" y="206.49" width="1.4" height="1.4"/><rect x="1039.31" y="206.49" width="1.4" height="1.4"/><rect x="1042.79" y="206.49" width="1.4" height="1.4"/><rect x="1045.42" y="206.49" width="1.4" height="1.4"/><rect x="1048.91" y="206.49" width="1.4" height="1.4"/><rect x="1051.54" y="206.49" width="1.4" height="1.4"/><rect x="1055.03" y="206.49" width="1.4" height="1.4"/><rect x="1057.66" y="206.49" width="1.4" height="1.4"/><rect x="1061.14" y="206.49" width="1.4" height="1.4"/><rect x="1063.77" y="206.49" width="1.4" height="1.4"/><rect x="1067.26" y="194.27" width="1.4" height="1.4"/><rect x="1067.26" y="201.23" width="1.4" height="1.4"/><rect x="1067.26" y="203.86" width="1.4" height="1.4"/><rect x="1067.26" y="206.49" width="1.4" height="1.4"/><rect x="1069.89" y="176.79" width="1.4" height="1.4"/><rect x="1069.89" y="179.42" width="1.4" height="1.4"/><rect x="1069.89" y="186.38" width="1.4" height="1.4"/><rect x="1069.89" y="189.01" width="1.4" height="1.4"/><rect x="1069.89" y="191.64" width="1.4" height="1.4"/><rect x="1073.38" y="189.01" width="1.4" height="1.4"/><rect x="1073.38" y="191.64" width="1.4" height="1.4"/><rect x="1073.38" y="194.27" width="1.4" height="1.4"/><rect x="1073.38" y="201.23" width="1.4" height="1.4"/><rect x="1076.01" y="203.86" width="1.4" height="1.4"/><rect x="1076.01" y="206.49" width="1.4" height="1.4"/><rect x="1079.49" y="206.49" width="1.4" height="1.4"/><rect x="1082.12" y="194.27" width="1.4" height="1.4"/><rect x="1082.12" y="201.23" width="1.4" height="1.4"/><rect x="1082.12" y="203.86" width="1.4" height="1.4"/><rect x="1082.12" y="206.49" width="1.4" height="1.4"/><rect x="1082.12" y="209.12" width="1.4" height="1.4"/><rect x="1085.61" y="176.79" width="1.4" height="1.4"/><rect x="1085.61" y="179.42" width="1.4" height="1.4"/><rect x="1085.61" y="186.38" width="1.4" height="1.4"/><rect x="1085.61" y="189.01" width="1.4" height="1.4"/><rect x="1085.61" y="191.64" width="1.4" height="1.4"/><rect x="1088.24" y="189.01" width="1.4" height="1.4"/><rect x="1088.24" y="191.64" width="1.4" height="1.4"/><rect x="1088.24" y="194.27" width="1.4" height="1.4"/><rect x="1088.24" y="201.23" width="1.4" height="1.4"/><rect x="1091.72" y="203.86" width="1.4" height="1.4"/><rect x="1091.72" y="206.49" width="1.4" height="1.4"/><rect x="1091.72" y="209.12" width="1.4" height="1.4"/><rect x="1094.35" y="216.08" width="1.4" height="1.4"/><rect x="1094.35" y="218.71" width="1.4" height="1.4"/><rect x="1094.35" y="221.34" width="1.4" height="1.4"/><rect x="1094.35" y="223.97" width="1.4" height="1.4"/><rect x="1097.84" y="221.34" width="1.4" height="1.4"/><rect x="1097.84" y="223.97" width="1.4" height="1.4"/><rect x="1097.84" y="230.93" width="1.4" height="1.4"/><rect x="1097.84" y="233.56" width="1.4" height="1.4"/><rect x="1100.47" y="206.49" width="1.4" height="1.4"/><rect x="1100.47" y="209.12" width="1.4" height="1.4"/><rect x="1100.47" y="216.08" width="1.4" height="1.4"/><rect x="1100.47" y="218.71" width="1.4" height="1.4"/><rect x="1103.96" y="206.49" width="1.4" height="1.4"/><rect x="1106.59" y="206.49" width="1.4" height="1.4"/><rect x="1106.59" y="209.12" width="1.4" height="1.4"/><rect x="1106.59" y="216.08" width="1.4" height="1.4"/><rect x="1106.59" y="218.71" width="1.4" height="1.4"/><rect x="1106.59" y="221.34" width="1.4" height="1.4"/><rect x="1106.59" y="223.97" width="1.4" height="1.4"/><rect x="1106.59" y="230.93" width="1.4" height="1.4"/><rect x="1106.59" y="233.56" width="1.4" height="1.4"/><rect x="1110.07" y="236.19" width="1.4" height="1.4"/><rect x="1110.07" y="238.81" width="1.4" height="1.4"/><rect x="1110.07" y="245.77" width="1.4" height="1.4"/><rect x="1110.07" y="248.40" width="1.4" height="1.4"/><rect x="1110.07" y="251.03" width="1.4" height="1.4"/><rect x="1110.07" y="253.66" width="1.4" height="1.4"/><rect x="1110.07" y="260.62" width="1.4" height="1.4"/><rect x="1110.07" y="263.25" width="1.4" height="1.4"/><rect x="1112.70" y="221.34" width="1.4" height="1.4"/><rect x="1112.70" y="223.97" width="1.4" height="1.4"/><rect x="1112.70" y="230.93" width="1.4" height="1.4"/><rect x="1112.70" y="233.56" width="1.4" height="1.4"/><rect x="1112.70" y="236.19" width="1.4" height="1.4"/><rect x="1112.70" y="238.81" width="1.4" height="1.4"/><rect x="1112.70" y="245.77" width="1.4" height="1.4"/><rect x="1112.70" y="248.40" width="1.4" height="1.4"/><rect x="1116.19" y="206.49" width="1.4" height="1.4"/><rect x="1116.19" y="209.12" width="1.4" height="1.4"/><rect x="1116.19" y="216.08" width="1.4" height="1.4"/><rect x="1116.19" y="218.71" width="1.4" height="1.4"/><rect x="1118.82" y="206.49" width="1.4" height="1.4"/><rect x="1122.31" y="206.49" width="1.4" height="1.4"/><rect x="1124.94" y="203.86" width="1.4" height="1.4"/><rect x="1124.94" y="206.49" width="1.4" height="1.4"/><rect x="1128.42" y="189.01" width="1.4" height="1.4"/><rect x="1128.42" y="191.64" width="1.4" height="1.4"/><rect x="1128.42" y="194.27" width="1.4" height="1.4"/><rect x="1128.42" y="201.23" width="1.4" height="1.4"/><rect x="1131.05" y="176.79" width="1.4" height="1.4"/><rect x="1131.05" y="179.42" width="1.4" height="1.4"/><rect x="1131.05" y="186.38" width="1.4" height="1.4"/><rect x="1131.05" y="189.01" width="1.4" height="1.4"/><rect x="1131.05" y="191.64" width="1.4" height="1.4"/><rect x="1134.54" y="194.27" width="1.4" height="1.4"/><rect x="1134.54" y="201.23" width="1.4" height="1.4"/><rect x="1134.54" y="203.86" width="1.4" height="1.4"/><rect x="1134.54" y="206.49" width="1.4" height="1.4"/><rect x="1137.17" y="206.49" width="1.4" height="1.4"/><rect x="1140.66" y="206.49" width="1.4" height="1.4"/><rect x="1140.66" y="209.12" width="1.4" height="1.4"/><rect x="1143.29" y="216.08" width="1.4" height="1.4"/><rect x="1143.29" y="218.71" width="1.4" height="1.4"/><rect x="1143.29" y="221.34" width="1.4" height="1.4"/><rect x="1143.29" y="223.97" width="1.4" height="1.4"/><rect x="1146.77" y="230.93" width="1.4" height="1.4"/><rect x="1146.77" y="233.56" width="1.4" height="1.4"/><rect x="1149.40" y="233.56" width="1.4" height="1.4"/><rect x="1152.89" y="233.56" width="1.4" height="1.4"/><rect x="1155.52" y="233.56" width="1.4" height="1.4"/><rect x="1159.01" y="233.56" width="1.4" height="1.4"/><rect x="1161.64" y="221.34" width="1.4" height="1.4"/><rect x="1161.64" y="223.97" width="1.4" height="1.4"/><rect x="1161.64" y="230.93" width="1.4" height="1.4"/><rect x="1161.64" y="233.56" width="1.4" height="1.4"/><rect x="1165.12" y="203.86" width="1.4" height="1.4"/><rect x="1165.12" y="206.49" width="1.4" height="1.4"/><rect x="1165.12" y="209.12" width="1.4" height="1.4"/><rect x="1165.12" y="216.08" width="1.4" height="1.4"/><rect x="1165.12" y="218.71" width="1.4" height="1.4"/><rect x="1167.75" y="189.01" width="1.4" height="1.4"/><rect x="1167.75" y="191.64" width="1.4" height="1.4"/><rect x="1167.75" y="194.27" width="1.4" height="1.4"/><rect x="1167.75" y="201.23" width="1.4" height="1.4"/><rect x="1171.24" y="176.79" width="1.4" height="1.4"/><rect x="1171.24" y="179.42" width="1.4" height="1.4"/><rect x="1171.24" y="186.38" width="1.4" height="1.4"/><rect x="1171.24" y="189.01" width="1.4" height="1.4"/><rect x="1171.24" y="191.64" width="1.4" height="1.4"/><rect x="1173.87" y="194.27" width="1.4" height="1.4"/><rect x="1173.87" y="201.23" width="1.4" height="1.4"/><rect x="1173.87" y="203.86" width="1.4" height="1.4"/><rect x="1173.87" y="206.49" width="1.4" height="1.4"/><rect x="1177.36" y="206.49" width="1.4" height="1.4"/><rect x="1179.99" y="206.49" width="1.4" height="1.4"/><rect x="1183.47" y="206.49" width="1.4" height="1.4"/><rect x="1186.10" y="206.49" width="1.4" height="1.4"/><rect x="1189.59" y="203.86" width="1.4" height="1.4"/><rect x="1189.59" y="206.49" width="1.4" height="1.4"/><rect x="1192.22" y="189.01" width="1.4" height="1.4"/><rect x="1192.22" y="191.64" width="1.4" height="1.4"/><rect x="1192.22" y="194.27" width="1.4" height="1.4"/><rect x="1192.22" y="201.23" width="1.4" height="1.4"/><rect x="1195.71" y="176.79" width="1.4" height="1.4"/><rect x="1195.71" y="179.42" width="1.4" height="1.4"/><rect x="1195.71" y="186.38" width="1.4" height="1.4"/><rect x="1195.71" y="189.01" width="1.4" height="1.4"/><rect x="1195.71" y="191.64" width="1.4" height="1.4"/><rect x="1195.71" y="194.27" width="1.4" height="1.4"/><rect x="1195.71" y="201.23" width="1.4" height="1.4"/><rect x="1195.71" y="203.86" width="1.4" height="1.4"/><rect x="1198.34" y="206.49" width="1.4" height="1.4"/><rect x="1198.34" y="209.12" width="1.4" height="1.4"/><rect x="1198.34" y="216.08" width="1.4" height="1.4"/><rect x="1198.34" y="218.71" width="1.4" height="1.4"/><rect x="1198.34" y="221.34" width="1.4" height="1.4"/><rect x="1198.34" y="223.97" width="1.4" height="1.4"/><rect x="1198.34" y="230.93" width="1.4" height="1.4"/><rect x="1198.34" y="233.56" width="1.4" height="1.4"/><rect x="1201.82" y="233.56" width="1.4" height="1.4"/><rect x="1204.45" y="221.34" width="1.4" height="1.4"/><rect x="1204.45" y="223.97" width="1.4" height="1.4"/><rect x="1204.45" y="230.93" width="1.4" height="1.4"/><rect x="1204.45" y="233.56" width="1.4" height="1.4"/><rect x="1207.94" y="191.64" width="1.4" height="1.4"/><rect x="1207.94" y="194.27" width="1.4" height="1.4"/><rect x="1207.94" y="201.23" width="1.4" height="1.4"/><rect x="1207.94" y="203.86" width="1.4" height="1.4"/><rect x="1207.94" y="206.49" width="1.4" height="1.4"/><rect x="1207.94" y="209.12" width="1.4" height="1.4"/><rect x="1207.94" y="216.08" width="1.4" height="1.4"/><rect x="1207.94" y="218.71" width="1.4" height="1.4"/><rect x="1210.57" y="176.79" width="1.4" height="1.4"/><rect x="1210.57" y="179.42" width="1.4" height="1.4"/><rect x="1210.57" y="186.38" width="1.4" height="1.4"/><rect x="1210.57" y="189.01" width="1.4" height="1.4"/><rect x="1210.57" y="191.64" width="1.4" height="1.4"/><rect x="1214.06" y="194.27" width="1.4" height="1.4"/><rect x="1214.06" y="201.23" width="1.4" height="1.4"/><rect x="1214.06" y="203.86" width="1.4" height="1.4"/><rect x="1214.06" y="206.49" width="1.4" height="1.4"/><rect x="1216.69" y="206.49" width="1.4" height="1.4"/><rect x="1220.17" y="206.49" width="1.4" height="1.4"/><rect x="1220.17" y="209.12" width="1.4" height="1.4"/><rect x="1220.17" y="216.08" width="1.4" height="1.4"/><rect x="1220.17" y="218.71" width="1.4" height="1.4"/><rect x="1222.80" y="221.34" width="1.4" height="1.4"/><rect x="1222.80" y="223.97" width="1.4" height="1.4"/><rect x="1222.80" y="230.93" width="1.4" height="1.4"/><rect x="1222.80" y="233.56" width="1.4" height="1.4"/><rect x="1226.29" y="233.56" width="1.4" height="1.4"/><rect x="1228.92" y="233.56" width="1.4" height="1.4"/><rect x="1232.41" y="233.56" width="1.4" height="1.4"/><rect x="1235.04" y="233.56" width="1.4" height="1.4"/></svg>
</body></html>
